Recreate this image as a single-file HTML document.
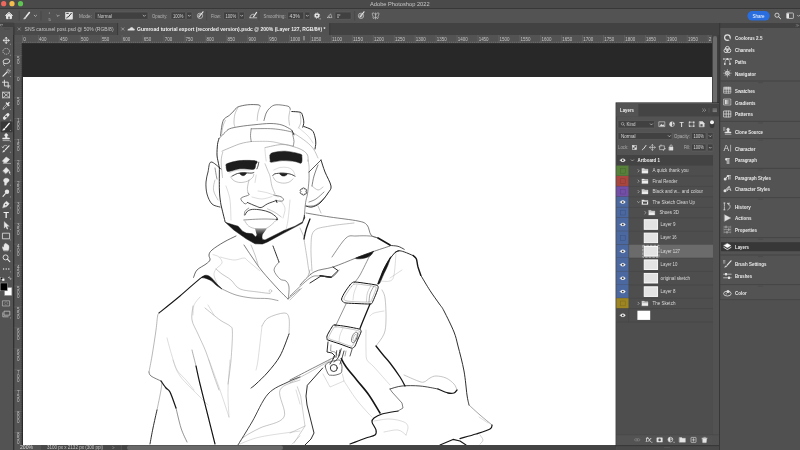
<!DOCTYPE html>
<html><head><meta charset="utf-8">
<style>
*{box-sizing:border-box;margin:0;padding:0}
html,body{width:800px;height:450px;overflow:hidden;background:#282828;font-family:"Liberation Sans",sans-serif}
.a{position:absolute}
svg{position:absolute;left:0;top:0}
svg text{font-family:"Liberation Sans",sans-serif}
#title{left:0;top:0;width:800px;height:8.4px;background:#4a4a4a}
#opts{left:0;top:8.4px;width:800px;height:14.2px;background:#535353;border-top:0.6px solid #383838}
#tabs{left:0;top:22.6px;width:720px;height:12.4px;background:#424242}
#hrul{left:14.4px;top:35px;width:697.6px;height:8px;background:#535353}
#vrul{left:14.4px;top:35px;width:8.1px;height:410px;background:#535353}
#tools{left:0;top:26.6px;width:13.4px;height:424px;background:#535353}
#dark{left:22.5px;top:43px;width:689.5px;height:34px;background:#282828}
#canvas{left:22.5px;top:76.7px;width:689.5px;height:368.3px;background:#fff}
#status{left:14.4px;top:445px;width:705px;height:5px;background:#535353}
#rtop{left:720px;top:22.6px;width:80px;height:5.4px;background:#424242}
#right{left:720px;top:28px;width:80px;height:422px;background:#535353}
</style></head><body>
<div class="a" id="title"></div>
<div class="a" id="opts"></div>
<div class="a" id="tabs"></div>
<div class="a" id="hrul"></div>
<div class="a" id="dark"></div>
<div class="a" id="canvas"></div>
<div class="a" id="vrul"></div>
<div class="a" id="tools"></div>
<div class="a" id="status"></div>
<div class="a" id="rtop"></div>
<div class="a" id="right"></div>
<svg width="800" height="450" viewBox="0 0 800 450" style="opacity:0.999">
<defs><filter id="nf" x="0" y="0" width="800" height="450" filterUnits="userSpaceOnUse"><feOffset dx="0" dy="0"/></filter><linearGradient id="gr" x1="0" x2="1" y1="0" y2="0"><stop offset="0" stop-color="#eee"/><stop offset="1" stop-color="#666"/></linearGradient><linearGradient id="goat" x1="0" x2="0" y1="0" y2="1"><stop offset="0" stop-color="#a0a0a0"/><stop offset="0.5" stop-color="#2c2c2c"/><stop offset="1" stop-color="#111"/></linearGradient><clipPath id="cv"><rect x="22.5" y="76.7" width="689.5" height="368.3"/></clipPath></defs>
<g clip-path="url(#cv)" fill="none" stroke="#111" stroke-linecap="round" stroke-linejoin="round">
<path d="M220.5 135.5C220.8 133.8 221.4 127.8 222.0 125.0C222.6 122.2 222.9 120.6 224.2 119.0C225.4 117.4 227.9 116.6 229.5 115.2C231.1 113.8 232.6 112.2 234.0 110.8C235.4 109.4 235.6 108.0 237.8 107.0C240.1 106.0 244.1 105.2 247.5 104.8C250.9 104.4 255.9 104.6 258.0 104.8C260.1 105.0 259.8 106.0 260.2 106.2" stroke="#4a4a4a" stroke-width="0.8"/>
<path d="M221.6 134.0C221.8 132.7 222.4 128.3 223.0 126.0C223.6 123.7 225.0 121.3 225.4 120.4" stroke="#8c8c8c" stroke-width="0.5"/>
<path d="M260.2 106.2C259.8 107.3 258.5 110.6 258.0 113.0C257.5 115.4 257.3 119.2 257.2 120.5" stroke="#8c8c8c" stroke-width="0.5"/>
<path d="M237.8 107.8C237.3 108.9 235.4 112.0 234.8 114.5C234.2 117.0 234.0 120.8 234.0 122.8C234.0 124.8 234.7 125.9 234.8 126.5" stroke="#8c8c8c" stroke-width="0.5"/>
<path d="M264.0 120.5C264.4 119.2 265.2 115.1 266.2 113.0C267.2 110.9 268.4 109.2 270.0 107.8C271.6 106.4 273.0 105.1 276.0 104.8C279.0 104.5 285.6 105.5 288.0 106.2C290.4 106.9 289.8 108.7 290.2 109.2" stroke="#4a4a4a" stroke-width="0.7"/>
<path d="M290.2 109.2C290.0 110.6 288.9 114.9 288.8 117.5C288.7 120.1 289.4 123.8 289.5 125.0" stroke="#8c8c8c" stroke-width="0.5"/>
<path d="M291.8 111.5C293.2 111.6 298.3 111.7 300.0 112.2C301.7 112.7 301.6 112.9 302.2 114.5C302.8 116.1 303.7 119.9 303.8 122.0C303.9 124.1 302.9 126.3 302.7 127.2" stroke="#161616" stroke-width="0.9"/>
<path d="M300.0 113.0C300.1 114.5 301.1 119.5 300.8 122.0C300.6 124.5 298.9 127.0 298.5 128.0" stroke="#8c8c8c" stroke-width="0.5"/>
<path d="M303.8 126.5C305.2 127.1 310.1 128.4 312.0 130.2C313.9 131.9 314.4 134.9 315.0 137.0C315.6 139.1 315.8 141.0 315.8 143.0C315.8 145.0 315.1 148.0 315.0 149.0" stroke="#161616" stroke-width="0.9"/>
<path d="M294.0 133.2C296.0 134.6 302.8 138.9 306.0 141.5C309.2 144.1 311.5 146.2 313.5 149.0C315.5 151.8 317.2 156.5 318.0 158.0" stroke="#8c8c8c" stroke-width="0.5"/>
<path d="M291.8 130.2L294.0 134.8" stroke="#161616" stroke-width="0.9"/>
<path d="M299.0 128.0C300.5 129.3 305.7 133.5 308.0 136.0C310.3 138.5 312.2 141.8 313.0 143.0" stroke="#aaa" stroke-width="0.4"/>
<path d="M219.0 138.5C220.0 137.5 223.2 134.1 225.0 132.5C226.8 130.9 227.0 129.8 229.5 128.8C232.0 127.8 235.8 127.2 240.0 126.5C244.2 125.8 250.0 125.2 255.0 124.7C260.0 124.2 265.5 123.5 270.0 123.5C274.5 123.5 278.5 124.0 282.0 125.0C285.5 126.0 289.5 128.8 291.0 129.5" stroke="#4a4a4a" stroke-width="0.7"/>
<path d="M251.2 128.8C254.8 128.8 266.4 128.3 273.0 128.8C279.6 129.3 287.8 130.9 291.0 131.8C294.2 132.7 292.0 132.4 292.5 134.0C293.0 135.6 293.9 139.5 294.0 141.5C294.1 143.5 293.3 145.2 293.2 146.0" stroke="#4a4a4a" stroke-width="0.6"/>
<path d="M251.2 141.5C254.3 141.5 264.9 141.1 270.0 141.5C275.1 141.9 278.1 143.1 282.0 143.8C285.9 144.6 291.3 145.6 293.2 146.0" stroke="#8c8c8c" stroke-width="0.5"/>
<path d="M251.2 128.8C251.1 129.9 250.5 133.4 250.5 135.5C250.5 137.6 251.1 140.5 251.2 141.5" stroke="#4a4a4a" stroke-width="0.6"/>
<path d="M222.0 151.2C222.5 151.0 222.0 151.0 225.0 149.8C228.0 148.6 235.6 145.2 240.0 143.8C244.4 142.4 249.3 141.9 251.2 141.5" stroke="#8c8c8c" stroke-width="0.6"/>
<path d="M265.5 147.5C268.2 147.0 277.2 144.6 282.0 144.5C286.8 144.4 290.5 145.8 294.0 146.8C297.5 147.8 300.8 149.1 303.0 150.5C305.2 151.9 306.6 153.2 307.5 155.0C308.4 156.8 308.0 160.2 308.1 161.2" stroke="#8c8c8c" stroke-width="0.6"/>
<path d="M219.0 138.5C218.8 139.5 217.8 141.8 217.5 144.5C217.2 147.2 216.9 152.1 217.0 155.0C217.1 157.9 217.8 159.8 218.2 162.0C218.6 164.2 219.2 167.0 219.4 168.0" stroke="#161616" stroke-width="0.9"/>
<path d="M222.8 152.0C222.5 153.5 221.2 156.8 221.2 161.0C221.1 165.2 222.3 174.8 222.5 177.5" stroke="#8c8c8c" stroke-width="0.5"/>
<path d="M264.8 147.5C264.9 148.8 265.2 152.8 265.4 155.0C265.6 157.2 266.1 160.0 266.2 161.0" stroke="#aaa" stroke-width="0.4"/>
<path d="M308.0 160.0C308.2 161.0 308.8 164.0 309.0 166.0C309.2 168.0 309.0 171.0 309.0 172.0" stroke="#8c8c8c" stroke-width="0.5"/>
<path d="M226.2 165.6C226.4 164.6 225.2 164.3 227.5 163.5C229.8 162.7 235.2 161.0 240.0 160.6C244.8 160.2 253.6 160.3 256.2 161.0C258.8 161.7 255.8 163.8 255.6 165.0C255.4 166.2 255.5 167.3 255.0 168.0C254.5 168.7 255.0 169.3 252.5 169.4C250.0 169.5 243.9 168.5 240.0 168.8C236.1 169.2 231.1 171.4 228.8 171.5C226.6 171.6 226.9 170.4 226.5 169.4C226.1 168.4 226.0 166.6 226.2 165.6Z" fill="#1d1d1d" stroke="#1d1d1d" stroke-width="0.5" />
<path d="M270.0 155.6C270.4 154.4 270.0 153.5 272.5 152.8C275.0 152.1 280.4 151.0 285.0 151.2C289.6 151.4 297.2 153.1 300.0 154.0C302.8 154.9 301.7 155.4 301.9 156.9C302.1 158.4 302.3 162.3 301.2 163.1C300.1 163.9 298.1 161.9 295.0 161.5C291.9 161.1 286.5 160.5 282.5 160.6C278.5 160.7 273.2 162.3 271.2 162.2C269.1 162.1 270.4 161.1 270.2 160.0C270.0 158.9 269.6 156.8 270.0 155.6Z" fill="#1d1d1d" stroke="#1d1d1d" stroke-width="0.5" />
<path d="M258.8 162.2C258.7 162.8 258.3 164.9 258.0 166.0C257.7 167.1 257.1 168.3 256.9 168.8" stroke="#161616" stroke-width="0.7"/>
<path d="M221.0 169.0C219.3 167.8 213.2 161.5 211.0 162.0C208.8 162.5 208.8 168.7 208.0 172.0C207.2 175.3 206.2 178.3 206.0 182.0C205.8 185.7 206.0 190.3 207.0 194.0C208.0 197.7 209.8 201.8 212.0 204.0C214.2 206.2 218.7 206.5 220.0 207.0" stroke="#161616" stroke-width="0.8"/>
<path d="M215.0 168.0C215.2 169.0 215.7 172.2 216.0 174.0C216.3 175.8 216.8 178.2 217.0 179.0" stroke="#4a4a4a" stroke-width="0.6"/>
<path d="M215.0 180.0C214.8 181.0 213.8 184.0 213.6 186.0C213.4 188.0 213.3 189.7 214.0 192.0C214.7 194.3 217.3 198.7 218.0 200.0" stroke="#8c8c8c" stroke-width="0.5"/>
<path d="M309.0 172.0L321.0 160.0" stroke="#161616" stroke-width="0.7"/>
<path d="M321.0 160.0C321.7 162.0 323.3 167.7 325.0 172.0C326.7 176.3 330.5 182.5 331.0 186.0C331.5 189.5 329.8 190.2 328.0 193.0C326.2 195.8 322.7 200.7 320.0 203.0C317.3 205.3 314.3 206.5 312.0 207.0C309.7 207.5 307.0 206.2 306.0 206.0" stroke="#161616" stroke-width="0.9"/>
<path d="M318.0 165.0C317.3 166.8 315.0 172.5 314.0 176.0C313.0 179.5 312.3 184.3 312.0 186.0" stroke="#4a4a4a" stroke-width="0.7"/>
<path d="M312.0 186.0C313.0 186.7 316.2 189.8 318.0 190.0C319.8 190.2 322.2 187.5 323.0 187.0" stroke="#8c8c8c" stroke-width="0.5"/>
<path d="M309.0 202.0C310.2 201.5 313.5 200.7 316.0 199.0C318.5 197.3 322.7 193.2 324.0 192.0" stroke="#4a4a4a" stroke-width="0.6"/>
<path d="M219.4 168.0C219.4 171.7 219.2 184.2 219.4 190.0C219.6 195.8 220.1 199.0 220.6 202.5C221.1 206.0 221.8 208.1 222.5 211.2C223.2 214.3 224.6 219.5 225.0 221.2" stroke="#161616" stroke-width="0.9"/>
<path d="M304.4 215.0C304.6 212.9 305.1 206.0 305.6 202.5C306.1 199.0 306.9 197.6 307.5 193.8C308.1 190.1 308.8 183.6 309.0 180.0C309.2 176.4 309.0 173.3 309.0 172.0" stroke="#4a4a4a" stroke-width="0.6"/>
<path d="M225.0 221.9L233.8 230.0L246.2 238.8L255.0 243.8L262.5 244.0L267.5 241.9L283.8 233.1L302.5 223.1L304.4 215.0L304.8 218.0L302.5 221.9L295.0 226.2L283.8 230.6L280.0 232.5L275.0 235.0L265.0 240.0L262.5 239.4L261.2 235.0L263.0 232.6L258.6 232.6L258.1 233.8L255.6 236.9L252.5 233.8L246.2 233.1L242.5 231.2L238.1 226.2L233.8 225.0L227.5 223.1Z" fill="#181818" stroke="#181818" stroke-width="0.5" />
<path d="M255 228.6L266.9 228.4L262.6 234.4L261.6 240L257 236Z" fill="url(#goat)" stroke="none"/>
<path d="M231.9 176.2C232.8 175.8 235.5 174.1 237.5 173.5C239.5 172.9 241.5 172.9 243.8 172.8C246.1 172.7 249.5 173.2 251.2 173.1C252.9 173.0 253.4 172.6 253.8 172.5" stroke="#161616" stroke-width="0.8"/>
<path d="M240.0 173.2C240.8 172.9 245.4 172.7 246.2 173.0C247.0 173.3 245.5 174.6 245.0 175.0C244.5 175.4 243.6 175.7 243.0 175.7C242.4 175.7 241.7 175.4 241.2 175.0C240.7 174.6 239.2 173.5 240.0 173.2Z" fill="#222" stroke="#222" stroke-width="0.5" />
<path d="M230.6 176.9C231.1 177.5 232.2 179.7 233.8 180.6C235.4 181.5 237.7 182.4 240.0 182.5C242.3 182.6 245.4 182.0 247.5 181.2C249.6 180.4 251.4 178.6 252.5 177.5C253.6 176.4 253.6 174.9 253.8 174.4" stroke="#8c8c8c" stroke-width="0.5"/>
<path d="M272.8 175.6C273.2 175.3 273.4 174.2 275.0 173.8C276.6 173.4 280.0 173.1 282.5 173.1C285.0 173.1 287.9 173.5 290.0 174.0C292.1 174.5 294.2 175.8 295.0 176.2" stroke="#161616" stroke-width="0.8"/>
<path d="M280.0 173.4C280.9 173.1 286.1 173.4 287.0 173.8C287.9 174.2 286.2 175.2 285.6 175.6C285.0 176.0 284.2 176.1 283.5 176.1C282.8 176.1 282.0 175.8 281.4 175.4C280.8 175.0 279.1 173.7 280.0 173.4Z" fill="#222" stroke="#222" stroke-width="0.5" />
<path d="M273.1 176.9C273.6 177.6 274.6 180.2 276.2 181.2C277.8 182.2 280.4 182.9 282.5 183.1C284.6 183.3 287.0 182.9 288.8 182.2C290.6 181.5 292.4 179.4 293.1 178.8" stroke="#8c8c8c" stroke-width="0.5"/>
<path d="M273.8 170.0C274.8 169.6 277.7 167.9 280.0 167.5C282.3 167.1 285.4 167.1 287.5 167.5C289.6 167.9 291.2 168.8 292.5 170.0C293.8 171.2 294.6 174.2 295.0 175.0" stroke="#aaa" stroke-width="0.4"/>
<path d="M229.0 173.0C230.2 172.6 232.5 171.1 236.0 170.6C239.5 170.1 247.7 170.1 250.0 170.0" stroke="#aaa" stroke-width="0.4"/>
<path d="M265.0 163.8C265.4 164.8 266.7 167.9 267.5 170.0C268.3 172.1 269.3 173.5 270.0 176.2C270.7 178.9 271.1 183.3 271.9 186.2C272.7 189.1 274.5 192.5 275.0 193.8" stroke="#8c8c8c" stroke-width="0.5"/>
<path d="M256.2 175.0L255.0 182.5" stroke="#aaa" stroke-width="0.4"/>
<path d="M249.0 180.0C248.7 181.3 247.6 185.8 247.4 188.0C247.2 190.2 248.0 192.2 248.1 193.1" stroke="#8c8c8c" stroke-width="0.5"/>
<path d="M248.1 193.1C248.2 193.4 249.8 194.3 248.8 195.0C247.8 195.7 243.2 196.7 241.9 197.5C240.6 198.3 240.7 198.9 241.2 200.0C241.7 201.1 243.9 203.4 245.0 203.8C246.1 204.2 247.1 202.7 247.5 202.5" stroke="#4a4a4a" stroke-width="0.7"/>
<path d="M247.5 202.5C248.9 203.1 253.9 205.4 256.2 206.2C258.5 207.0 259.3 207.9 261.2 207.5C263.1 207.1 265.0 205.0 267.5 203.8C270.0 202.7 274.8 201.1 276.2 200.6" stroke="#161616" stroke-width="0.8"/>
<path d="M276.2 200.2L276.9 202.4" stroke="#161616" stroke-width="1.0"/>
<path d="M276.2 200.6C277.0 200.7 280.0 201.3 281.2 201.2C282.4 201.1 283.5 200.5 283.5 199.8C283.5 199.1 282.8 197.7 281.2 196.9C279.6 196.1 275.0 195.3 273.8 195.0" stroke="#4a4a4a" stroke-width="0.7"/>
<path d="M258.0 191.0C259.7 191.3 264.7 192.0 268.0 193.0C271.3 194.0 276.3 196.3 278.0 197.0" stroke="#aaa" stroke-width="0.4"/>
<path d="M252.0 197.0C253.7 197.3 258.7 199.1 262.0 199.0C265.3 198.9 270.3 197.0 272.0 196.6" stroke="#aaa" stroke-width="0.4"/>
<path d="M248.8 208.1C248.2 208.6 245.7 210.0 245.0 211.2C244.3 212.3 244.5 214.4 244.4 215.0" stroke="#4a4a4a" stroke-width="0.6"/>
<path d="M245.0 215.0C245.4 214.4 246.2 212.1 247.5 211.2C248.8 210.3 250.2 209.6 252.5 209.4C254.8 209.2 258.3 209.5 261.2 210.0C264.1 210.5 267.5 211.3 270.0 212.5C272.5 213.7 274.9 215.8 276.2 216.9C277.4 218.1 277.3 219.0 277.5 219.4" stroke="#161616" stroke-width="0.8"/>
<circle cx="276.8" cy="219.4" r="0.9" fill="#222" stroke="none"/>
<path d="M243.8 220.0C245.2 219.9 249.0 219.6 252.5 219.4C256.0 219.2 261.1 219.0 265.0 219.0C268.9 219.0 274.3 219.3 276.2 219.4" stroke="#4a4a4a" stroke-width="0.6"/>
<path d="M245.0 221.2C245.6 222.0 246.9 224.9 248.8 226.2C250.7 227.5 253.5 228.4 256.2 228.8C258.9 229.2 262.5 229.4 265.0 228.8C267.5 228.2 269.3 226.5 271.2 225.0C273.1 223.5 275.5 220.8 276.4 220.0" stroke="#8c8c8c" stroke-width="0.5"/>
<path d="M267.5 208.8C268.8 209.4 272.7 211.2 275.0 212.5C277.3 213.8 280.2 216.2 281.2 216.9" stroke="#8c8c8c" stroke-width="0.5"/>
<path d="M280.0 200.0C280.8 201.3 284.5 205.0 285.0 208.0C285.5 211.0 283.3 216.3 283.0 218.0" stroke="#aaa" stroke-width="0.4"/>
<path d="M226.0 186.0C226.7 188.3 229.2 194.3 230.0 200.0C230.8 205.7 230.8 216.7 231.0 220.0" stroke="#aaa" stroke-width="0.4"/>
<path d="M290.0 200.0C289.7 203.3 288.7 215.0 288.0 220.0C287.3 225.0 286.3 228.3 286.0 230.0" stroke="#aaa" stroke-width="0.4"/>
<path d="M306.1 191.5A1.3 1.3 0 0 1 304.8 193.8A1.3 1.3 0 0 1 302.2 193.8A1.3 1.3 0 0 1 300.9 191.5A1.3 1.3 0 0 1 302.2 189.2A1.3 1.3 0 0 1 304.8 189.2A1.3 1.3 0 0 1 306.1 191.5Z" stroke="#2a2a2a" stroke-width="0.8"/>
<path d="M306.0 206.0C307.7 205.8 312.5 206.8 316.0 205.0C319.5 203.2 325.2 196.7 327.0 195.0" stroke="#4a4a4a" stroke-width="0.6"/>
<path d="M318.0 206.0L321.0 213.0" stroke="#8c8c8c" stroke-width="0.5"/>
<path d="M306.0 213.0C310.0 213.7 321.3 215.7 330.0 217.0C338.7 218.3 351.8 219.7 358.0 221.0C364.2 222.3 364.8 222.7 367.0 225.0C369.2 227.3 369.2 232.8 371.0 235.0C372.8 237.2 376.8 237.5 378.0 238.0" stroke="#4a4a4a" stroke-width="0.7"/>
<path d="M378.0 238.0L390.0 245.0" stroke="#161616" stroke-width="1.6"/>
<path d="M389.8 245.4C391.2 245.6 395.6 245.7 398.0 246.3C400.4 247.0 403.2 248.8 404.2 249.3" stroke="#161616" stroke-width="0.8"/>
<path d="M310.0 219.0C309.3 220.8 307.0 226.7 306.0 230.0C305.0 233.3 304.3 237.5 304.0 239.0" stroke="#161616" stroke-width="1.3"/>
<path d="M304.0 239.0C304.5 242.2 306.2 252.7 307.0 258.0C307.8 263.3 308.3 268.2 309.0 271.0C309.7 273.8 310.7 274.3 311.0 275.0" stroke="#8c8c8c" stroke-width="0.5"/>
<path d="M300.0 228.0L304.0 237.0" stroke="#8c8c8c" stroke-width="0.5"/>
<path d="M354.0 223.0C350.0 223.5 336.7 224.7 330.0 226.0C323.3 227.3 317.2 227.5 314.0 231.0C310.8 234.5 311.3 240.3 311.0 247.0C310.7 253.7 311.8 267.0 312.0 271.0" stroke="#8c8c8c" stroke-width="0.5"/>
<path d="M332.0 257.0C334.3 253.8 342.0 241.5 346.0 238.0C350.0 234.5 352.0 236.3 356.0 236.0C360.0 235.7 366.3 235.7 370.0 236.0C373.7 236.3 376.7 237.7 378.0 238.0" stroke="#4a4a4a" stroke-width="0.6"/>
<path d="M390.0 246.0C387.0 247.0 377.7 250.0 372.0 252.0C366.3 254.0 362.5 255.5 356.0 258.0C349.5 260.5 340.0 264.7 333.0 267.0C326.0 269.3 319.5 269.0 314.0 272.0C308.5 275.0 302.3 282.8 300.0 285.0" stroke="#4a4a4a" stroke-width="0.7"/>
<path d="M356.0 258.0C357.7 256.9 369.1 253.1 372.0 252.0C374.9 250.9 373.7 250.9 373.4 251.6C373.1 252.3 371.9 254.8 370.0 256.0C368.1 257.2 364.3 258.3 362.0 258.6C359.7 258.9 354.3 259.1 356.0 258.0Z" fill="#161616" stroke="#161616" stroke-width="0.5" />
<path d="M310.0 283.0L321.0 276.0L331.0 277.4L338.0 270.6L333.0 267.0" stroke="#161616" stroke-width="0.9"/>
<path d="M320.0 275.6L331.0 277.2" stroke="#161616" stroke-width="1.4"/>
<path d="M236.0 236.0C234.0 237.0 228.0 239.7 224.0 242.0C220.0 244.3 214.5 247.8 212.0 250.0C209.5 252.2 209.3 253.3 209.0 255.0C208.7 256.7 210.5 258.5 210.0 260.0C209.5 261.5 208.2 262.3 206.0 264.0C203.8 265.7 199.1 267.8 197.0 270.0C194.9 272.2 194.2 276.2 193.6 277.4" stroke="#2a2a2a" stroke-width="0.7"/>
<path d="M159.0 313.0C162.5 310.2 173.2 301.7 180.0 296.0C186.8 290.3 195.8 281.9 200.0 278.6C204.2 275.3 204.2 276.4 205.0 276.0" stroke="#161616" stroke-width="1.1"/>
<path d="M202.0 277.6C201.8 277.1 203.8 275.7 205.0 275.4C206.2 275.1 207.7 275.3 209.0 276.0C210.3 276.7 211.7 278.1 213.0 279.4C214.3 280.7 215.5 282.4 217.0 284.0C218.5 285.6 222.2 288.8 222.0 289.0C221.8 289.2 217.8 286.4 216.0 285.0C214.2 283.6 212.7 281.7 211.0 280.6C209.3 279.5 207.5 278.9 206.0 278.4C204.5 277.9 202.2 278.1 202.0 277.6Z" fill="#161616" stroke="#161616" stroke-width="0.5" />
<path d="M213.0 254.6C214.0 255.0 217.5 255.6 219.0 257.0C220.5 258.4 222.5 261.0 222.0 263.0C221.5 265.0 217.3 267.0 216.0 269.0C214.7 271.0 213.8 272.7 214.0 275.0C214.2 277.3 216.5 281.7 217.0 283.0" stroke="#aaa" stroke-width="0.4"/>
<path d="M220.0 257.0C222.3 257.5 230.0 259.8 234.0 260.0C238.0 260.2 241.7 257.8 244.0 258.0C246.3 258.2 245.3 258.8 248.0 261.0C250.7 263.2 258.0 269.3 260.0 271.0" stroke="#aaa" stroke-width="0.4"/>
<path d="M244.0 245.0C245.3 247.0 249.0 252.7 252.0 257.0C255.0 261.3 257.7 265.7 262.0 271.0C266.3 276.3 273.7 284.3 278.0 289.0C282.3 293.7 286.3 297.3 288.0 299.0" stroke="#4a4a4a" stroke-width="0.7"/>
<path d="M251.0 245.0C251.7 246.7 253.8 251.7 255.0 255.0C256.2 258.3 257.5 263.3 258.0 265.0" stroke="#8c8c8c" stroke-width="0.5"/>
<path d="M222.0 289.0C224.3 290.0 231.0 293.5 236.0 295.0C241.0 296.5 246.7 297.4 252.0 298.0C257.3 298.6 263.7 298.2 268.0 298.6C272.3 299.0 276.3 300.3 278.0 300.6" stroke="#666" stroke-width="0.6"/>
<path d="M216.0 269.0C217.0 269.8 219.5 272.2 222.0 274.0C224.5 275.8 228.0 277.5 231.0 280.0C234.0 282.5 235.5 287.0 240.0 289.0C244.5 291.0 253.0 291.2 258.0 292.0C263.0 292.8 268.0 293.2 270.0 293.5" stroke="#8c8c8c" stroke-width="0.5"/>
<path d="M273.0 246.0C273.5 247.3 275.0 251.3 276.0 254.0C277.0 256.7 278.5 260.7 279.0 262.0" stroke="#161616" stroke-width="0.9"/>
<path d="M279.0 262.0C278.2 263.3 273.8 267.2 274.0 270.0C274.2 272.8 278.0 277.2 280.0 279.0C282.0 280.8 284.5 279.7 286.0 281.0C287.5 282.3 288.6 284.2 289.0 287.0C289.4 289.8 288.5 296.2 288.4 298.0" stroke="#4a4a4a" stroke-width="0.6"/>
<circle cx="270.4" cy="291" r="1.4" stroke="#999" stroke-width="0.4"/>
<path d="M288.0 299.0C289.0 298.2 292.0 295.7 294.0 294.0C296.0 292.3 299.0 289.8 300.0 289.0" stroke="#4a4a4a" stroke-width="0.6"/>
<path d="M200.0 297.0C199.0 298.3 195.2 302.0 194.0 305.0C192.8 308.0 193.2 313.3 193.0 315.0" stroke="#aaa" stroke-width="0.4"/>
<path d="M208.0 305.0C208.5 305.8 210.0 308.3 211.0 310.0C212.0 311.7 213.5 314.2 214.0 315.0" stroke="#aaa" stroke-width="0.4"/>
<path d="M159.0 313.0C158.8 313.5 158.1 313.2 157.6 316.0C157.1 318.8 156.9 323.3 156.0 330.0C155.1 336.7 153.2 349.0 152.0 356.0C150.8 363.0 149.5 369.3 149.0 372.0" stroke="#707070" stroke-width="0.5"/>
<path d="M149.0 372.0C149.3 372.7 149.0 374.5 151.0 376.0C153.0 377.5 159.3 380.2 161.0 381.0" stroke="#4a4a4a" stroke-width="0.7"/>
<path d="M161.0 381.0C161.8 382.2 164.5 386.2 166.0 388.0C167.5 389.8 168.3 388.7 170.0 392.0C171.7 395.3 175.0 405.3 176.0 408.0" stroke="#161616" stroke-width="1.3"/>
<path d="M176.0 408.0C176.8 411.3 179.2 422.3 181.0 428.0C182.8 433.7 186.0 439.7 187.0 442.0" stroke="#4a4a4a" stroke-width="0.6"/>
<path d="M162.0 382.0C161.8 383.3 161.8 385.3 161.0 390.0C160.2 394.7 157.7 406.7 157.0 410.0" stroke="#707070" stroke-width="0.5"/>
<path d="M157.0 410.0C156.3 413.0 154.2 422.3 153.0 428.0C151.8 433.7 150.5 441.3 150.0 444.0" stroke="#161616" stroke-width="0.9"/>
<path d="M167.0 338.0C167.8 341.0 170.3 350.7 172.0 356.0C173.7 361.3 174.7 366.0 177.0 370.0C179.3 374.0 183.2 376.7 186.0 380.0C188.8 383.3 192.7 388.3 194.0 390.0" stroke="#aaa" stroke-width="0.4"/>
<path d="M173.0 360.0C174.2 362.7 175.5 369.8 180.0 376.0C184.5 382.2 195.3 392.2 200.0 397.0C204.7 401.8 206.7 403.7 208.0 405.0" stroke="#aaa" stroke-width="0.4"/>
<path d="M192.0 350.0C192.3 351.3 193.3 355.3 194.0 358.0C194.7 360.7 195.7 364.7 196.0 366.0" stroke="#777" stroke-width="0.6"/>
<path d="M196.0 366.0C196.7 369.0 198.0 375.7 200.0 384.0C202.0 392.3 205.5 406.0 208.0 416.0C210.5 426.0 213.8 439.3 215.0 444.0" stroke="#161616" stroke-width="1.2"/>
<path d="M193.0 306.0C192.8 308.3 191.2 315.3 192.0 320.0C192.8 324.7 195.7 328.7 198.0 334.0C200.3 339.3 203.3 345.0 206.0 352.0C208.7 359.0 211.8 369.7 214.0 376.0C216.2 382.3 218.2 387.7 219.0 390.0" stroke="#8c8c8c" stroke-width="0.5"/>
<path d="M205.0 308.0C207.5 310.0 215.8 317.0 220.0 320.0C224.2 323.0 227.9 324.0 230.0 326.0C232.1 328.0 232.2 326.3 232.4 332.0C232.6 337.7 231.7 351.3 231.0 360.0C230.3 368.7 228.5 380.0 228.0 384.0" stroke="#8c8c8c" stroke-width="0.5"/>
<path d="M209.0 360.0C210.8 365.0 216.7 380.5 220.0 390.0C223.3 399.5 227.5 412.5 229.0 417.0" stroke="#aaa" stroke-width="0.4"/>
<path d="M230.0 360.0C229.7 365.0 228.2 380.5 228.0 390.0C227.8 399.5 228.8 412.5 229.0 417.0" stroke="#aaa" stroke-width="0.4"/>
<path d="M262.0 326.0C263.0 324.7 264.3 320.2 268.0 318.0C271.7 315.8 280.5 313.0 284.0 313.0C287.5 313.0 288.2 314.5 289.0 318.0C289.8 321.5 289.0 331.3 289.0 334.0" stroke="#8c8c8c" stroke-width="0.5"/>
<path d="M289.0 334.0C287.5 337.7 283.5 349.7 280.0 356.0C276.5 362.3 272.0 367.3 268.0 372.0C264.0 376.7 258.8 381.3 256.0 384.0C253.2 386.7 251.8 387.3 251.0 388.0" stroke="#161616" stroke-width="0.9"/>
<path d="M262.0 326.0C261.3 331.7 259.0 352.7 258.0 360.0C257.0 367.3 256.3 368.3 256.0 370.0" stroke="#aaa" stroke-width="0.4"/>
<path d="M300.0 377.0C298.0 377.8 293.3 379.2 288.0 382.0C282.7 384.8 274.0 387.3 268.0 394.0C262.0 400.7 257.0 413.5 252.0 422.0C247.0 430.5 240.3 441.2 238.0 445.0" stroke="#161616" stroke-width="0.8"/>
<path d="M300.0 380.0C296.7 381.7 282.7 383.8 280.0 390.0C277.3 396.2 287.3 410.7 284.0 417.0C280.7 423.3 266.7 424.7 260.0 428.0C253.3 431.3 247.7 434.2 244.0 437.0C240.3 439.8 239.0 443.7 238.0 445.0" stroke="#8c8c8c" stroke-width="0.5"/>
<path d="M300.0 431.0C293.3 432.0 270.0 434.8 260.0 437.0C250.0 439.2 243.3 442.8 240.0 444.0" stroke="#aaa" stroke-width="0.4"/>
<path d="M296.0 390.0L300.0 404.0" stroke="#aaa" stroke-width="0.4"/>
<path d="M300.0 436.0L292.0 444.0" stroke="#aaa" stroke-width="0.4"/>
<path d="M370.0 255.0C368.3 258.3 362.7 270.3 360.0 275.0C357.3 279.7 355.0 281.7 354.0 283.0" stroke="#4a4a4a" stroke-width="0.6"/>
<path d="M398.9 250.8C398.2 251.1 396.6 251.0 395.0 252.6C393.4 254.2 391.0 257.2 389.0 260.2C387.0 263.2 384.5 267.5 383.0 270.8C381.5 274.1 380.9 277.6 380.0 279.8C379.1 282.0 378.0 283.3 377.6 284.0" stroke="#161616" stroke-width="1.0"/>
<path d="M390.6 257.0C390.2 257.0 387.3 262.2 385.8 265.0C384.3 267.8 382.9 271.0 381.6 274.0C380.3 277.0 378.3 281.5 378.0 283.0C377.7 284.5 378.8 284.6 379.8 283.0C380.8 281.4 382.6 276.6 384.0 273.6C385.4 270.6 386.9 267.8 388.0 265.0C389.1 262.2 391.0 257.0 390.6 257.0Z" fill="#161616" stroke="#161616" stroke-width="0.5" />
<path d="M396.0 253.0C395.7 256.7 395.0 270.3 394.0 275.0C393.0 279.7 392.3 280.0 390.0 281.0C387.7 282.0 381.7 281.0 380.0 281.0" stroke="#aaa" stroke-width="0.4"/>
<path d="M395.0 252.6C395.6 252.3 397.4 250.9 398.9 250.8C400.4 250.7 401.8 251.1 404.2 251.9C406.6 252.7 411.7 255.0 413.2 255.6" stroke="#161616" stroke-width="0.9"/>
<path d="M413.2 255.6C413.7 256.1 415.5 256.9 416.3 258.7C417.1 260.5 417.1 263.4 417.8 266.2C418.6 269.0 420.3 273.8 420.8 275.3" stroke="#161616" stroke-width="1.4"/>
<path d="M420.8 275.3C422.3 277.8 426.8 285.6 429.9 290.4C433.0 295.2 437.0 300.6 439.4 304.0C441.8 307.4 441.6 306.3 444.0 311.0C446.4 315.7 451.7 326.2 454.0 332.0C456.3 337.8 456.3 339.5 458.0 346.0C459.7 352.5 462.5 362.8 464.0 371.0C465.5 379.2 466.2 389.3 467.0 395.0C467.8 400.7 468.7 403.3 469.0 405.0" stroke="#161616" stroke-width="0.9"/>
<path d="M350.0 285.0C351.2 283.5 351.2 283.5 352.0 283.0C352.8 282.5 352.7 281.9 355.0 282.0C357.3 282.1 362.5 282.9 366.0 283.4C369.5 283.9 374.0 284.5 376.0 285.0C378.0 285.5 377.7 285.8 378.0 286.4C378.3 287.0 378.3 287.1 378.0 288.4C377.7 289.7 376.8 291.9 376.0 294.0C375.2 296.1 373.7 299.5 373.0 301.0C372.3 302.5 372.5 302.5 372.0 303.0C371.5 303.5 372.3 303.9 370.0 304.0C367.7 304.1 362.0 303.8 358.0 303.6C354.0 303.4 348.5 303.3 346.0 303.0C343.5 302.7 343.7 302.3 343.0 301.6C342.3 300.9 341.3 300.6 341.6 299.0C341.9 297.4 343.6 294.3 345.0 292.0C346.4 289.7 348.8 286.5 350.0 285.0Z" stroke="#161616" stroke-width="1.0"/>
<path d="M351.6 286.4C352.9 285.1 353.0 284.2 355.4 284.0C357.8 283.8 362.8 284.8 366.0 285.2C369.2 285.6 372.7 286.0 374.4 286.6C376.1 287.2 376.5 286.3 376.0 288.6C375.5 290.9 372.5 298.2 371.4 300.4C370.3 302.6 371.6 301.8 369.4 302.0C367.2 302.2 361.7 302.0 358.0 301.8C354.3 301.6 349.3 301.5 347.0 301.0C344.7 300.5 343.9 300.1 344.0 298.6C344.1 297.1 346.3 294.0 347.6 292.0C348.9 290.0 350.3 287.7 351.6 286.4Z" stroke="#8c8c8c" stroke-width="0.5"/>
<path d="M374.0 286.0C373.3 287.3 370.8 291.3 370.0 294.0C369.2 296.7 369.2 300.7 369.0 302.0" stroke="#4a4a4a" stroke-width="0.5"/>
<path d="M371.0 285.6C370.4 286.8 368.2 290.3 367.4 293.0C366.6 295.7 366.6 300.2 366.4 301.6" stroke="#8c8c8c" stroke-width="0.4"/>
<path d="M357.0 285.0C356.5 286.3 354.7 290.5 354.0 293.0C353.3 295.5 353.2 298.8 353.0 300.0" stroke="#aaa" stroke-width="0.4"/>
<path d="M346.0 304.0L336.0 325.0" stroke="#4a4a4a" stroke-width="0.6"/>
<path d="M370.0 304.0C369.2 306.0 366.7 311.9 365.0 316.0C363.3 320.1 360.8 326.3 360.0 328.4" stroke="#161616" stroke-width="1.3"/>
<path d="M335.0 325.0C332.7 324.8 333.5 325.3 333.0 325.6C332.5 325.9 332.7 325.9 332.0 327.0C331.3 328.1 329.8 330.5 329.0 332.0C328.2 333.5 327.3 334.9 327.0 336.0C326.7 337.1 326.8 337.7 327.0 338.4C327.2 339.1 325.8 339.1 328.0 340.0C330.2 340.9 336.2 342.7 340.0 344.0C343.8 345.3 348.8 347.4 351.0 348.0C353.2 348.6 352.7 347.9 353.4 347.6C354.1 347.3 354.2 347.4 355.0 346.0C355.8 344.6 357.0 341.3 358.0 339.0C359.0 336.7 360.6 333.5 361.0 332.0C361.4 330.5 360.9 330.7 360.6 330.2C360.3 329.7 361.3 329.6 359.0 329.0C356.7 328.4 351.0 327.3 347.0 326.6C343.0 325.9 337.3 325.2 335.0 325.0Z" stroke="#161616" stroke-width="1.0"/>
<path d="M336.0 326.8C333.7 326.8 334.6 326.8 333.4 328.4C332.2 330.0 329.6 334.8 329.0 336.6C328.4 338.4 328.0 338.0 329.8 339.0C331.6 340.0 336.6 341.2 340.0 342.4C343.4 343.6 348.2 345.6 350.4 346.0C352.6 346.4 351.6 347.2 353.0 345.0C354.4 342.8 358.2 335.0 359.0 332.6C359.8 330.2 359.6 331.3 357.6 330.6C355.6 329.9 350.6 329.0 347.0 328.4C343.4 327.8 338.3 326.8 336.0 326.8Z" stroke="#8c8c8c" stroke-width="0.5"/>
<ellipse cx="354.6" cy="337.4" rx="2.5" ry="5.6" transform="rotate(22 354.6 337.4)" stroke="#444" stroke-width="0.6"/>
<ellipse cx="354.8" cy="337.6" rx="1.3" ry="3.6" transform="rotate(22 354.8 337.6)" stroke="#888" stroke-width="0.4"/>
<path d="M343.0 328.0C342.5 329.2 340.7 332.7 340.0 335.0C339.3 337.3 339.2 340.8 339.0 342.0" stroke="#aaa" stroke-width="0.4"/>
<path d="M328.0 342.0L327.0 352.0L332.0 353.0L335.0 356.0L330.0 364.0" stroke="#161616" stroke-width="0.9"/>
<path d="M340.0 350.0C339.7 351.3 339.0 356.0 338.0 358.0C337.0 360.0 334.7 361.3 334.0 362.0" stroke="#161616" stroke-width="0.8"/>
<path d="M344.0 351.0C343.7 352.2 342.7 355.8 342.0 358.0C341.3 360.2 340.3 363.0 340.0 364.0" stroke="#161616" stroke-width="0.8"/>
<path d="M352.0 349.4L350.0 356.0" stroke="#161616" stroke-width="0.7"/>
<path d="M331.0 345.0L330.6 351.0L335.0 352.0L337.0 355.0" stroke="#4a4a4a" stroke-width="0.5"/>
<path d="M346.0 351.0L345.0 356.0" stroke="#4a4a4a" stroke-width="0.5"/>
<path d="M382.0 290.0C382.5 291.3 384.3 293.0 385.0 298.0C385.7 303.0 386.2 314.0 386.0 320.0C385.8 326.0 385.7 329.7 384.0 334.0C382.3 338.3 377.3 344.0 376.0 346.0" stroke="#8c8c8c" stroke-width="0.5"/>
<path d="M376.0 346.0C377.3 347.7 381.7 353.2 384.0 356.0C386.3 358.8 387.3 359.5 390.0 363.0C392.7 366.5 397.5 373.2 400.0 377.0C402.5 380.8 404.2 384.5 405.0 386.0" stroke="#161616" stroke-width="1.3"/>
<path d="M370.0 316.0C370.7 315.5 371.7 313.8 374.0 313.0C376.3 312.2 382.3 311.3 384.0 311.0" stroke="#aaa" stroke-width="0.4"/>
<path d="M366.0 330.0C366.0 333.3 365.8 345.0 366.0 350.0C366.2 355.0 365.7 357.2 367.0 360.0C368.3 362.8 370.2 362.8 374.0 367.0C377.8 371.2 387.3 382.0 390.0 385.0" stroke="#aaa" stroke-width="0.4"/>
<path d="M390.0 278.0L402.0 270.0" stroke="#aaa" stroke-width="0.4"/>
<path d="M290.0 296.0C293.3 293.0 305.0 281.3 310.0 278.0C315.0 274.7 316.3 276.2 320.0 276.0C323.7 275.8 328.8 278.0 332.0 277.0C335.2 276.0 337.8 271.2 339.0 270.0" stroke="#4a4a4a" stroke-width="0.6"/>
<path d="M290.0 300.0L302.0 288.0" stroke="#8c8c8c" stroke-width="0.5"/>
<path d="M310.0 270.0L308.0 276.0" stroke="#8c8c8c" stroke-width="0.5"/>
<path d="M325.3 366.0C325.4 364.8 326.2 364.1 327.0 363.4C327.8 362.7 328.7 362.5 330.0 362.0C331.3 361.5 333.4 360.9 335.0 360.6C336.6 360.3 338.3 359.7 339.3 360.0C340.3 360.3 340.6 361.5 341.0 362.6C341.4 363.7 341.9 365.5 342.0 366.7C342.1 367.9 341.9 369.0 341.8 370.0C341.7 371.0 341.9 372.0 341.3 372.7C340.7 373.4 339.2 374.0 338.0 374.4C336.8 374.8 335.2 375.2 334.0 375.3C332.8 375.4 331.9 375.3 331.0 375.2C330.1 375.1 329.4 375.5 328.7 374.7C328.0 373.9 327.2 372.1 326.6 370.6C326.0 369.2 325.2 367.2 325.3 366.0Z" stroke="#4a4a4a" stroke-width="0.8"/>
<circle cx="333.8" cy="368" r="3.5" stroke="#222" stroke-width="0.9"/>
<path d="M331.3 358.7C327.8 360.5 316.9 366.1 310.0 369.6C303.1 373.2 293.3 378.3 290.0 380.0" stroke="#4a4a4a" stroke-width="0.7"/>
<path d="M330.0 360.7C326.7 362.6 316.7 368.3 310.0 372.0C303.3 375.7 293.3 380.9 290.0 382.7" stroke="#8c8c8c" stroke-width="0.5"/>
<path d="M322.7 368.0L307.3 385.3L306.0 396.0L307.0 405.0L314.0 433.0L311.0 439.0L305.0 445.0" stroke="#161616" stroke-width="0.9"/>
<path d="M297.3 386.7L300.7 396.0L305.0 426.0L294.0 443.0" stroke="#8c8c8c" stroke-width="0.4"/>
<path d="M290.0 433.0L305.0 426.0" stroke="#8c8c8c" stroke-width="0.4"/>
<path d="M323.0 374.0L330.0 387.0L344.0 381.0L342.4 374.0" stroke="#aaa" stroke-width="0.4"/>
<path d="M341.3 358.7C342.1 360.0 343.4 363.1 346.0 366.7C348.6 370.2 352.9 375.3 356.7 380.0C360.5 384.7 364.8 389.2 368.7 394.7C372.6 400.2 378.1 409.9 380.0 413.0" stroke="#161616" stroke-width="1.6"/>
<path d="M344.0 381.0C346.0 384.0 352.0 393.7 356.0 399.0C360.0 404.3 365.3 410.0 368.0 413.0C370.7 416.0 371.3 416.3 372.0 417.0" stroke="#aaa" stroke-width="0.4"/>
<path d="M334.0 356.0L332.7 358.7" stroke="#161616" stroke-width="0.7"/>
<path d="M336.7 350.7L336.0 357.3" stroke="#161616" stroke-width="0.7"/>
<path d="M341.3 348.7L339.3 356.0" stroke="#161616" stroke-width="0.7"/>
<path d="M390.0 389.0C392.0 388.5 397.0 386.5 402.0 386.0C407.0 385.5 414.0 385.5 420.0 386.0C426.0 386.5 435.0 388.5 438.0 389.0" stroke="#161616" stroke-width="0.8"/>
<path d="M438.0 389.0C439.7 389.7 445.3 392.3 448.0 393.0C450.7 393.7 452.5 393.5 454.0 393.0C455.5 392.5 456.5 390.5 457.0 390.0" stroke="#161616" stroke-width="1.3"/>
<path d="M457.0 390.0C456.5 389.0 455.8 386.0 454.0 384.0C452.2 382.0 449.0 379.3 446.0 378.0C443.0 376.7 438.7 376.0 436.0 376.0C433.3 376.0 432.0 377.0 430.0 378.0C428.0 379.0 426.0 381.5 424.0 382.0C422.0 382.5 421.3 382.2 418.0 381.0C414.7 379.8 406.3 376.0 404.0 375.0" stroke="#8c8c8c" stroke-width="0.5"/>
<path d="M390.0 389.0L392.0 392.0L402.0 403.0L403.0 408.0L398.0 411.0" stroke="#4a4a4a" stroke-width="0.7"/>
<path d="M398.0 411.0C395.3 411.5 386.0 412.8 382.0 414.0C378.0 415.2 375.7 416.7 374.0 418.0C372.3 419.3 371.7 420.0 372.0 422.0C372.3 424.0 375.5 427.8 376.0 430.0C376.5 432.2 376.7 433.7 375.0 435.0C373.3 436.3 368.8 437.0 366.0 438.0C363.2 439.0 360.7 440.0 358.0 441.0C355.3 442.0 351.3 443.5 350.0 444.0" stroke="#161616" stroke-width="1.2"/>
<path d="M374.0 421.0C376.7 420.7 385.0 418.8 390.0 419.0C395.0 419.2 401.0 420.7 404.0 422.0C407.0 423.3 407.7 424.8 408.0 427.0C408.3 429.2 406.3 433.7 406.0 435.0" stroke="#aaa" stroke-width="0.4"/>
<path d="M384.0 432.0C386.3 431.7 394.3 429.5 398.0 430.0C401.7 430.5 404.7 434.2 406.0 435.0" stroke="#aaa" stroke-width="0.4"/>
<path d="M469.0 405.0C470.8 406.7 476.2 411.7 480.0 415.0C483.8 418.3 490.0 423.3 492.0 425.0" stroke="#4a4a4a" stroke-width="0.5"/>
<path d="M492.0 425.0C491.7 425.7 492.7 427.5 490.0 429.0C487.3 430.5 481.0 432.4 476.0 434.0C471.0 435.6 462.7 437.8 460.0 438.6" stroke="#161616" stroke-width="1.2"/>
<path d="M479.0 417.0L488.0 423.0" stroke="#aaa" stroke-width="0.4"/>
<path d="M440.0 445.0L453.0 439.4L460.0 441.0L466.0 445.0" stroke="#161616" stroke-width="1.1"/>
<path d="M480.0 435.0C480.5 435.8 483.0 438.5 483.0 440.0C483.0 441.5 480.5 443.3 480.0 444.0" stroke="#8c8c8c" stroke-width="0.4"/>
</g>
<g id="ui-main" filter="url(#nf)">
<circle cx="3.7" cy="3.7" r="2.6" fill="#ee6a5f" stroke="none" stroke-width="0.7" />
<circle cx="12" cy="3.7" r="2.6" fill="#f5bf4f" stroke="none" stroke-width="0.7" />
<circle cx="20.5" cy="3.7" r="2.6" fill="#5fc653" stroke="none" stroke-width="0.7" />
<text x="370" y="6.36" font-size="6" fill="#c9c9c9" text-anchor="start" textLength="59.6" lengthAdjust="spacingAndGlyphs">Adobe Photoshop 2022</text>
<path d="M5.6 15.4L9 12.3L12.4 15.4M6.6 15V18.6H8.2V16.4H9.8V18.6H11.4V15" stroke="#e8e8e8" stroke-width="1" fill="none" stroke-linecap="round" stroke-linejoin="round" />
<path d="M6.6 15.2L9 13L11.4 15.2V18.6H6.6Z" stroke="none" stroke-width="0" fill="#e8e8e8" stroke-linecap="round" stroke-linejoin="round" />
<rect x="8.3" y="16.6" width="1.4" height="2" fill="#535353" />
<line x1="19.3" y1="11" x2="19.3" y2="20.5" stroke="#444" stroke-width="0.6" />
<path d="M24 18.8C24.3 17.3 25 16.9 25.8 17.3C26.4 17.9 26 18.8 24 18.8Z" stroke="#e8e8e8" stroke-width="0.5" fill="#e8e8e8" stroke-linecap="round" stroke-linejoin="round" />
<path d="M26.2 16.6L29.4 12.6" stroke="#e8e8e8" stroke-width="1.6" fill="none" stroke-linecap="round" stroke-linejoin="round" />
<path d="M34.2 15.2L35.4 16.4L36.6 15.2" stroke="#d0d0d0" stroke-width="0.7" fill="none" stroke-linecap="round" stroke-linejoin="round" />
<line x1="41" y1="11" x2="41" y2="20.5" stroke="#444" stroke-width="0.6" />
<circle cx="49.3" cy="12.9" r="0.5" fill="#cfcfcf" stroke="none" stroke-width="0.7" />
<text x="48.4" y="20.94" font-size="4" fill="#c0c0c0" text-anchor="start">5</text>
<path d="M56.8 15.2L58 16.4L59.2 15.2" stroke="#d0d0d0" stroke-width="0.7" fill="none" stroke-linecap="round" stroke-linejoin="round" />
<rect x="65.2" y="12" width="7.6" height="7.4" fill="#e4e4e4" rx="0.6"/>
<path d="M66.8 18C67 17 67.6 16.8 68.2 17.1L71.4 13.2" stroke="#333" stroke-width="1" fill="none" stroke-linecap="round" stroke-linejoin="round" />
<rect x="66.3" y="12.8" width="2.4" height="1.2" fill="#555" />
<text x="79" y="17.70" font-size="5" fill="#b4b4b4" text-anchor="start" textLength="13.0" lengthAdjust="spacingAndGlyphs">Mode:</text>
<rect x="94.5" y="12" width="53.5" height="7.3" rx="0.8" fill="#414141" stroke="#686868" stroke-width="0.5"/>
<text x="97.5" y="17.70" font-size="5" fill="#d4d4d4" text-anchor="start" textLength="14.5" lengthAdjust="spacingAndGlyphs">Normal</text>
<path d="M143.1 15.2L144.3 16.4L145.5 15.2" stroke="#d0d0d0" stroke-width="0.7" fill="none" stroke-linecap="round" stroke-linejoin="round" />
<text x="152" y="17.70" font-size="5" fill="#b4b4b4" text-anchor="start" textLength="15.5" lengthAdjust="spacingAndGlyphs">Opacity:</text>
<rect x="171" y="12" width="14.6" height="7.3" rx="0.8" fill="#414141" stroke="#686868" stroke-width="0.5"/>
<text x="173" y="17.70" font-size="5" fill="#d4d4d4" text-anchor="start" textLength="10.5" lengthAdjust="spacingAndGlyphs">100%</text>
<rect x="186.6" y="12" width="5.4" height="7.3" rx="0.8" fill="#414141" stroke="#686868" stroke-width="0.5"/>
<path d="M188.2 15.25L189.3 16.35L190.4 15.25" stroke="#d0d0d0" stroke-width="0.7" fill="none" stroke-linecap="round" stroke-linejoin="round" />
<circle cx="200" cy="15.8" r="2.7" fill="none" stroke="#e8e8e8" stroke-width="0.6" />
<path d="M199 17L203 11.8" stroke="#e8e8e8" stroke-width="1.1" fill="none" stroke-linecap="round" stroke-linejoin="round" />
<path d="M198.4 16.2A1.8 1.8 0 0 1 200.6 14.2" stroke="#e8e8e8" stroke-width="0.5" fill="none" stroke-linecap="round" stroke-linejoin="round" />
<line x1="206.6" y1="11" x2="206.6" y2="20.5" stroke="#444" stroke-width="0.6" />
<text x="211" y="17.70" font-size="5" fill="#b4b4b4" text-anchor="start" textLength="10.0" lengthAdjust="spacingAndGlyphs">Flow:</text>
<rect x="223.6" y="12" width="14.4" height="7.3" rx="0.8" fill="#414141" stroke="#686868" stroke-width="0.5"/>
<text x="225.4" y="17.70" font-size="5" fill="#d4d4d4" text-anchor="start" textLength="10.8" lengthAdjust="spacingAndGlyphs">100%</text>
<rect x="239" y="12" width="5.4" height="7.3" rx="0.8" fill="#414141" stroke="#686868" stroke-width="0.5"/>
<path d="M240.6 15.25L241.7 16.35L242.8 15.25" stroke="#d0d0d0" stroke-width="0.7" fill="none" stroke-linecap="round" stroke-linejoin="round" />
<path d="M250 17.6C250 15.4 251.6 14 253.6 14.2M249.8 17.8H256.6" stroke="#e8e8e8" stroke-width="0.7" fill="none" stroke-linecap="round" stroke-linejoin="round" />
<path d="M253.6 16.6L256.6 12.4" stroke="#e8e8e8" stroke-width="1.1" fill="none" stroke-linecap="round" stroke-linejoin="round" />
<line x1="259" y1="11" x2="259" y2="20.5" stroke="#444" stroke-width="0.6" />
<text x="263.6" y="17.70" font-size="5" fill="#b4b4b4" text-anchor="start" textLength="22.0" lengthAdjust="spacingAndGlyphs">Smoothing:</text>
<rect x="287.6" y="12" width="16" height="7.3" rx="0.8" fill="#414141" stroke="#686868" stroke-width="0.5"/>
<text x="289.6" y="17.70" font-size="5" fill="#d4d4d4" text-anchor="start" textLength="10.4" lengthAdjust="spacingAndGlyphs">43%</text>
<rect x="304.6" y="12" width="5.4" height="7.3" rx="0.8" fill="#414141" stroke="#686868" stroke-width="0.5"/>
<path d="M306.2 15.25L307.3 16.35L308.4 15.25" stroke="#d0d0d0" stroke-width="0.7" fill="none" stroke-linecap="round" stroke-linejoin="round" />
<circle cx="317" cy="15.6" r="1.7" fill="none" stroke="#e8e8e8" stroke-width="1.5" />
<circle cx="317" cy="15.6" r="2.7" fill="none" stroke="#e8e8e8" stroke-width="0.9" stroke-dasharray="1 1.12"/>
<rect x="319.6" y="18.4" width="1" height="1" fill="#ddd" />
<path d="M327.4 17.6H332L330.6 13.8L327.4 17.6M329.6 17.6A2 2 0 0 0 328.8 16" stroke="#cfcfcf" stroke-width="0.6" fill="none" stroke-linecap="round" stroke-linejoin="round" />
<rect x="335" y="12" width="16.2" height="7.3" rx="0.8" fill="#414141" stroke="#686868" stroke-width="0.5"/>
<text x="337" y="17.70" font-size="5" fill="#d4d4d4" text-anchor="start" textLength="3.6" lengthAdjust="spacingAndGlyphs">0°</text>
<line x1="354.6" y1="11" x2="354.6" y2="20.5" stroke="#444" stroke-width="0.6" />
<circle cx="361" cy="15.8" r="2.7" fill="none" stroke="#e8e8e8" stroke-width="0.6" />
<path d="M360 17L364 11.8" stroke="#e8e8e8" stroke-width="1.1" fill="none" stroke-linecap="round" stroke-linejoin="round" />
<circle cx="361" cy="15.8" r="1.2" fill="none" stroke="#e8e8e8" stroke-width="0.5" />
<path d="M375.6 13V19M375 14.2C373 12 372 12.6 372.4 14.6C372.8 16 373.6 16.4 373 17.6C372.8 18.8 374.4 18.8 375 17.4M376.2 14.2C378.2 12 379.2 12.6 378.8 14.6C378.4 16 377.6 16.4 378.2 17.6C378.4 18.8 376.8 18.8 376.2 17.4" stroke="#e8e8e8" stroke-width="0.6" fill="none" stroke-linecap="round" stroke-linejoin="round" />
<rect x="747.4" y="11" width="22.4" height="9.6" rx="4.8" fill="#2a6ee0"/>
<text x="752.6" y="17.60" font-size="5" fill="#fff" text-anchor="start" textLength="12.0" lengthAdjust="spacingAndGlyphs">Share</text>
<circle cx="777" cy="15.2" r="2.1" fill="none" stroke="#e8e8e8" stroke-width="0.8" />
<path d="M778.6 16.8L780.6 18.8" stroke="#e8e8e8" stroke-width="1" fill="none" stroke-linecap="round" stroke-linejoin="round" />
<rect x="786.6" y="13" width="6.8" height="5.4" rx="0.6" fill="none" stroke="#e6e6e6" stroke-width="0.7"/>
<rect x="787" y="13.4" width="2" height="4.6" fill="#e6e6e6" />
<path d="M797.5 15.25L798.6 16.35L799.7 15.25" stroke="#d0d0d0" stroke-width="0.7" fill="none" stroke-linecap="round" stroke-linejoin="round" />
<rect x="14.4" y="23" width="103" height="12" fill="#4a4a4a" />
<rect x="118" y="23" width="211.4" height="12" fill="#535353" />
<line x1="117.6" y1="23" x2="117.6" y2="35" stroke="#383838" stroke-width="0.7" />
<line x1="329.6" y1="23" x2="329.6" y2="35" stroke="#383838" stroke-width="0.7" />
<path d="M18 27.8L20.4 30.2M20.4 27.8L18 30.2" stroke="#bdbdbd" stroke-width="0.5" fill="none" stroke-linecap="round" stroke-linejoin="round" />
<text x="24.6" y="30.94" font-size="5.4" fill="#c4c4c4" text-anchor="start" textLength="89.0" lengthAdjust="spacingAndGlyphs">SNS carousel post.psd @ 50% (RGB/8)</text>
<path d="M121.6 27.8L124 30.2M124 27.8L121.6 30.2" stroke="#d0d0d0" stroke-width="0.5" fill="none" stroke-linecap="round" stroke-linejoin="round" />
<path d="M127.6 30.6H134.4C135.2 29.4 134.4 28.4 133.4 28.6C133 27 130.6 26.8 130 28.4C128.4 28.2 127.2 29.4 127.6 30.6Z" stroke="none" stroke-width="0" fill="#e0e0e0" stroke-linecap="round" stroke-linejoin="round" />
<text x="137" y="30.94" font-size="5.4" font-weight="bold" fill="#f0f0f0" text-anchor="start" textLength="188.4" lengthAdjust="spacingAndGlyphs">Gumroad tutorial export (recorded version).psdc @ 200% (Layer 127, RGB/8#) *</text>
<rect x="0" y="22.6" width="13.4" height="4" fill="#424242" />
<path d="M0.4 24.2L1.2 25L0.4 25.8M1.8 24.2L2.6 25L1.8 25.8" stroke="#ddd" stroke-width="0.5" fill="none" stroke-linecap="round" stroke-linejoin="round" />
<line x1="4" y1="29" x2="9.6" y2="29" stroke="#454545" stroke-width="1.2" stroke-dasharray="0.5 0.5"/>
<line x1="13.9" y1="26.6" x2="13.9" y2="450" stroke="#3a3a3a" stroke-width="1" />
<line x1="38.4" y1="35" x2="38.4" y2="43" stroke="#777" stroke-width="0.4" />
<text x="39.1" y="40.53" font-size="4.8" fill="#c4c4c4" text-anchor="start" textLength="7.5" lengthAdjust="spacingAndGlyphs">400</text>
<line x1="59.33" y1="35" x2="59.33" y2="43" stroke="#777" stroke-width="0.4" />
<text x="60.03" y="40.53" font-size="4.8" fill="#c4c4c4" text-anchor="start" textLength="7.5" lengthAdjust="spacingAndGlyphs">450</text>
<line x1="80.26" y1="35" x2="80.26" y2="43" stroke="#777" stroke-width="0.4" />
<text x="80.96" y="40.53" font-size="4.8" fill="#c4c4c4" text-anchor="start" textLength="7.5" lengthAdjust="spacingAndGlyphs">500</text>
<line x1="101.19" y1="35" x2="101.19" y2="43" stroke="#777" stroke-width="0.4" />
<text x="101.89" y="40.53" font-size="4.8" fill="#c4c4c4" text-anchor="start" textLength="7.5" lengthAdjust="spacingAndGlyphs">550</text>
<line x1="122.12" y1="35" x2="122.12" y2="43" stroke="#777" stroke-width="0.4" />
<text x="122.82" y="40.53" font-size="4.8" fill="#c4c4c4" text-anchor="start" textLength="7.5" lengthAdjust="spacingAndGlyphs">600</text>
<line x1="143.05" y1="35" x2="143.05" y2="43" stroke="#777" stroke-width="0.4" />
<text x="143.75" y="40.53" font-size="4.8" fill="#c4c4c4" text-anchor="start" textLength="7.5" lengthAdjust="spacingAndGlyphs">650</text>
<line x1="163.98" y1="35" x2="163.98" y2="43" stroke="#777" stroke-width="0.4" />
<text x="164.68" y="40.53" font-size="4.8" fill="#c4c4c4" text-anchor="start" textLength="7.5" lengthAdjust="spacingAndGlyphs">700</text>
<line x1="184.91" y1="35" x2="184.91" y2="43" stroke="#777" stroke-width="0.4" />
<text x="185.61" y="40.53" font-size="4.8" fill="#c4c4c4" text-anchor="start" textLength="7.5" lengthAdjust="spacingAndGlyphs">750</text>
<line x1="205.84" y1="35" x2="205.84" y2="43" stroke="#777" stroke-width="0.4" />
<text x="206.54" y="40.53" font-size="4.8" fill="#c4c4c4" text-anchor="start" textLength="7.5" lengthAdjust="spacingAndGlyphs">800</text>
<line x1="226.77" y1="35" x2="226.77" y2="43" stroke="#777" stroke-width="0.4" />
<text x="227.47" y="40.53" font-size="4.8" fill="#c4c4c4" text-anchor="start" textLength="7.5" lengthAdjust="spacingAndGlyphs">850</text>
<line x1="247.7" y1="35" x2="247.7" y2="43" stroke="#777" stroke-width="0.4" />
<text x="248.4" y="40.53" font-size="4.8" fill="#c4c4c4" text-anchor="start" textLength="7.5" lengthAdjust="spacingAndGlyphs">900</text>
<line x1="268.63" y1="35" x2="268.63" y2="43" stroke="#777" stroke-width="0.4" />
<text x="269.33" y="40.53" font-size="4.8" fill="#c4c4c4" text-anchor="start" textLength="7.5" lengthAdjust="spacingAndGlyphs">950</text>
<line x1="289.56" y1="35" x2="289.56" y2="43" stroke="#777" stroke-width="0.4" />
<text x="290.26" y="40.53" font-size="4.8" fill="#c4c4c4" text-anchor="start" textLength="10.0" lengthAdjust="spacingAndGlyphs">1000</text>
<line x1="310.49" y1="35" x2="310.49" y2="43" stroke="#777" stroke-width="0.4" />
<text x="311.19" y="40.53" font-size="4.8" fill="#c4c4c4" text-anchor="start" textLength="10.0" lengthAdjust="spacingAndGlyphs">1050</text>
<line x1="331.42" y1="35" x2="331.42" y2="43" stroke="#777" stroke-width="0.4" />
<text x="332.12" y="40.53" font-size="4.8" fill="#c4c4c4" text-anchor="start" textLength="10.0" lengthAdjust="spacingAndGlyphs">1100</text>
<line x1="352.35" y1="35" x2="352.35" y2="43" stroke="#777" stroke-width="0.4" />
<text x="353.05" y="40.53" font-size="4.8" fill="#c4c4c4" text-anchor="start" textLength="10.0" lengthAdjust="spacingAndGlyphs">1150</text>
<line x1="373.28" y1="35" x2="373.28" y2="43" stroke="#777" stroke-width="0.4" />
<text x="373.98" y="40.53" font-size="4.8" fill="#c4c4c4" text-anchor="start" textLength="10.0" lengthAdjust="spacingAndGlyphs">1200</text>
<line x1="394.21" y1="35" x2="394.21" y2="43" stroke="#777" stroke-width="0.4" />
<text x="394.91" y="40.53" font-size="4.8" fill="#c4c4c4" text-anchor="start" textLength="10.0" lengthAdjust="spacingAndGlyphs">1250</text>
<line x1="415.14" y1="35" x2="415.14" y2="43" stroke="#777" stroke-width="0.4" />
<text x="415.84" y="40.53" font-size="4.8" fill="#c4c4c4" text-anchor="start" textLength="10.0" lengthAdjust="spacingAndGlyphs">1300</text>
<line x1="436.07" y1="35" x2="436.07" y2="43" stroke="#777" stroke-width="0.4" />
<text x="436.77" y="40.53" font-size="4.8" fill="#c4c4c4" text-anchor="start" textLength="10.0" lengthAdjust="spacingAndGlyphs">1350</text>
<line x1="457" y1="35" x2="457" y2="43" stroke="#777" stroke-width="0.4" />
<text x="457.7" y="40.53" font-size="4.8" fill="#c4c4c4" text-anchor="start" textLength="10.0" lengthAdjust="spacingAndGlyphs">1400</text>
<line x1="477.93" y1="35" x2="477.93" y2="43" stroke="#777" stroke-width="0.4" />
<text x="478.63" y="40.53" font-size="4.8" fill="#c4c4c4" text-anchor="start" textLength="10.0" lengthAdjust="spacingAndGlyphs">1450</text>
<line x1="498.86" y1="35" x2="498.86" y2="43" stroke="#777" stroke-width="0.4" />
<text x="499.56" y="40.53" font-size="4.8" fill="#c4c4c4" text-anchor="start" textLength="10.0" lengthAdjust="spacingAndGlyphs">1500</text>
<line x1="519.79" y1="35" x2="519.79" y2="43" stroke="#777" stroke-width="0.4" />
<text x="520.49" y="40.53" font-size="4.8" fill="#c4c4c4" text-anchor="start" textLength="10.0" lengthAdjust="spacingAndGlyphs">1550</text>
<line x1="540.72" y1="35" x2="540.72" y2="43" stroke="#777" stroke-width="0.4" />
<text x="541.42" y="40.53" font-size="4.8" fill="#c4c4c4" text-anchor="start" textLength="10.0" lengthAdjust="spacingAndGlyphs">1600</text>
<line x1="561.65" y1="35" x2="561.65" y2="43" stroke="#777" stroke-width="0.4" />
<text x="562.35" y="40.53" font-size="4.8" fill="#c4c4c4" text-anchor="start" textLength="10.0" lengthAdjust="spacingAndGlyphs">1650</text>
<line x1="582.58" y1="35" x2="582.58" y2="43" stroke="#777" stroke-width="0.4" />
<text x="583.28" y="40.53" font-size="4.8" fill="#c4c4c4" text-anchor="start" textLength="10.0" lengthAdjust="spacingAndGlyphs">1700</text>
<line x1="603.51" y1="35" x2="603.51" y2="43" stroke="#777" stroke-width="0.4" />
<text x="604.21" y="40.53" font-size="4.8" fill="#c4c4c4" text-anchor="start" textLength="10.0" lengthAdjust="spacingAndGlyphs">1750</text>
<line x1="624.44" y1="35" x2="624.44" y2="43" stroke="#777" stroke-width="0.4" />
<text x="625.14" y="40.53" font-size="4.8" fill="#c4c4c4" text-anchor="start" textLength="10.0" lengthAdjust="spacingAndGlyphs">1800</text>
<line x1="645.37" y1="35" x2="645.37" y2="43" stroke="#777" stroke-width="0.4" />
<text x="646.07" y="40.53" font-size="4.8" fill="#c4c4c4" text-anchor="start" textLength="10.0" lengthAdjust="spacingAndGlyphs">1850</text>
<line x1="666.3" y1="35" x2="666.3" y2="43" stroke="#777" stroke-width="0.4" />
<text x="667" y="40.53" font-size="4.8" fill="#c4c4c4" text-anchor="start" textLength="10.0" lengthAdjust="spacingAndGlyphs">1900</text>
<line x1="687.23" y1="35" x2="687.23" y2="43" stroke="#777" stroke-width="0.4" />
<text x="687.93" y="40.53" font-size="4.8" fill="#c4c4c4" text-anchor="start" textLength="10.0" lengthAdjust="spacingAndGlyphs">1950</text>
<line x1="708.16" y1="35" x2="708.16" y2="43" stroke="#777" stroke-width="0.4" />
<text x="708.86" y="40.53" font-size="4.8" fill="#c4c4c4" text-anchor="start">2</text>
<line x1="22.3" y1="42.4" x2="712" y2="42.4" stroke="#8a8a8a" stroke-width="1.2" stroke-dasharray="0.4 1.693"/>
<line x1="22.5" y1="35" x2="22.5" y2="43" stroke="#777" stroke-width="0.4" />
<text x="23.2" y="40.53" font-size="4.8" fill="#c4c4c4" text-anchor="start">0</text>
<line x1="304" y1="36" x2="304" y2="40.4" stroke="#e8e8e8" stroke-width="0.7" />
<line x1="14.4" y1="43" x2="712" y2="43" stroke="#666" stroke-width="0.3" />
<line x1="14.4" y1="55.7" x2="22.5" y2="55.7" stroke="#777" stroke-width="0.4" />
<text x="18.3" y="59.5" font-size="4.6" fill="#c4c4c4" text-anchor="middle">5</text>
<text x="18.3" y="63.5" font-size="4.6" fill="#c4c4c4" text-anchor="middle">0</text>
<line x1="14.4" y1="76.7" x2="22.5" y2="76.7" stroke="#777" stroke-width="0.4" />
<text x="18.3" y="80.5" font-size="4.6" fill="#c4c4c4" text-anchor="middle">0</text>
<line x1="14.4" y1="97.63" x2="22.5" y2="97.63" stroke="#777" stroke-width="0.4" />
<text x="18.3" y="101.4" font-size="4.6" fill="#c4c4c4" text-anchor="middle">5</text>
<text x="18.3" y="105.4" font-size="4.6" fill="#c4c4c4" text-anchor="middle">0</text>
<line x1="14.4" y1="118.56" x2="22.5" y2="118.56" stroke="#777" stroke-width="0.4" />
<text x="18.3" y="122.4" font-size="4.6" fill="#c4c4c4" text-anchor="middle">1</text>
<text x="18.3" y="126.4" font-size="4.6" fill="#c4c4c4" text-anchor="middle">0</text>
<text x="18.3" y="130.4" font-size="4.6" fill="#c4c4c4" text-anchor="middle">0</text>
<line x1="14.4" y1="139.49" x2="22.5" y2="139.49" stroke="#777" stroke-width="0.4" />
<text x="18.3" y="143.3" font-size="4.6" fill="#c4c4c4" text-anchor="middle">1</text>
<text x="18.3" y="147.3" font-size="4.6" fill="#c4c4c4" text-anchor="middle">5</text>
<text x="18.3" y="151.3" font-size="4.6" fill="#c4c4c4" text-anchor="middle">0</text>
<line x1="14.4" y1="160.42" x2="22.5" y2="160.42" stroke="#777" stroke-width="0.4" />
<text x="18.3" y="164.2" font-size="4.6" fill="#c4c4c4" text-anchor="middle">2</text>
<text x="18.3" y="168.2" font-size="4.6" fill="#c4c4c4" text-anchor="middle">0</text>
<text x="18.3" y="172.2" font-size="4.6" fill="#c4c4c4" text-anchor="middle">0</text>
<line x1="14.4" y1="181.35" x2="22.5" y2="181.35" stroke="#777" stroke-width="0.4" />
<text x="18.3" y="185.2" font-size="4.6" fill="#c4c4c4" text-anchor="middle">2</text>
<text x="18.3" y="189.2" font-size="4.6" fill="#c4c4c4" text-anchor="middle">5</text>
<text x="18.3" y="193.2" font-size="4.6" fill="#c4c4c4" text-anchor="middle">0</text>
<line x1="14.4" y1="202.28" x2="22.5" y2="202.28" stroke="#777" stroke-width="0.4" />
<text x="18.3" y="206.1" font-size="4.6" fill="#c4c4c4" text-anchor="middle">3</text>
<text x="18.3" y="210.1" font-size="4.6" fill="#c4c4c4" text-anchor="middle">0</text>
<text x="18.3" y="214.1" font-size="4.6" fill="#c4c4c4" text-anchor="middle">0</text>
<line x1="14.4" y1="223.21" x2="22.5" y2="223.21" stroke="#777" stroke-width="0.4" />
<text x="18.3" y="227.0" font-size="4.6" fill="#c4c4c4" text-anchor="middle">3</text>
<text x="18.3" y="231.0" font-size="4.6" fill="#c4c4c4" text-anchor="middle">5</text>
<text x="18.3" y="235.0" font-size="4.6" fill="#c4c4c4" text-anchor="middle">0</text>
<line x1="14.4" y1="244.14" x2="22.5" y2="244.14" stroke="#777" stroke-width="0.4" />
<text x="18.3" y="247.9" font-size="4.6" fill="#c4c4c4" text-anchor="middle">4</text>
<text x="18.3" y="251.9" font-size="4.6" fill="#c4c4c4" text-anchor="middle">0</text>
<text x="18.3" y="255.9" font-size="4.6" fill="#c4c4c4" text-anchor="middle">0</text>
<line x1="14.4" y1="265.07" x2="22.5" y2="265.07" stroke="#777" stroke-width="0.4" />
<text x="18.3" y="268.9" font-size="4.6" fill="#c4c4c4" text-anchor="middle">4</text>
<text x="18.3" y="272.9" font-size="4.6" fill="#c4c4c4" text-anchor="middle">5</text>
<text x="18.3" y="276.9" font-size="4.6" fill="#c4c4c4" text-anchor="middle">0</text>
<line x1="14.4" y1="286" x2="22.5" y2="286" stroke="#777" stroke-width="0.4" />
<text x="18.3" y="289.8" font-size="4.6" fill="#c4c4c4" text-anchor="middle">5</text>
<text x="18.3" y="293.8" font-size="4.6" fill="#c4c4c4" text-anchor="middle">0</text>
<text x="18.3" y="297.8" font-size="4.6" fill="#c4c4c4" text-anchor="middle">0</text>
<line x1="14.4" y1="306.93" x2="22.5" y2="306.93" stroke="#777" stroke-width="0.4" />
<text x="18.3" y="310.7" font-size="4.6" fill="#c4c4c4" text-anchor="middle">5</text>
<text x="18.3" y="314.7" font-size="4.6" fill="#c4c4c4" text-anchor="middle">5</text>
<text x="18.3" y="318.7" font-size="4.6" fill="#c4c4c4" text-anchor="middle">0</text>
<line x1="14.4" y1="327.86" x2="22.5" y2="327.86" stroke="#777" stroke-width="0.4" />
<text x="18.3" y="331.7" font-size="4.6" fill="#c4c4c4" text-anchor="middle">6</text>
<text x="18.3" y="335.7" font-size="4.6" fill="#c4c4c4" text-anchor="middle">0</text>
<text x="18.3" y="339.7" font-size="4.6" fill="#c4c4c4" text-anchor="middle">0</text>
<line x1="14.4" y1="348.79" x2="22.5" y2="348.79" stroke="#777" stroke-width="0.4" />
<text x="18.3" y="352.6" font-size="4.6" fill="#c4c4c4" text-anchor="middle">6</text>
<text x="18.3" y="356.6" font-size="4.6" fill="#c4c4c4" text-anchor="middle">5</text>
<text x="18.3" y="360.6" font-size="4.6" fill="#c4c4c4" text-anchor="middle">0</text>
<line x1="14.4" y1="369.72" x2="22.5" y2="369.72" stroke="#777" stroke-width="0.4" />
<text x="18.3" y="373.5" font-size="4.6" fill="#c4c4c4" text-anchor="middle">7</text>
<text x="18.3" y="377.5" font-size="4.6" fill="#c4c4c4" text-anchor="middle">0</text>
<text x="18.3" y="381.5" font-size="4.6" fill="#c4c4c4" text-anchor="middle">0</text>
<line x1="14.4" y1="390.65" x2="22.5" y2="390.65" stroke="#777" stroke-width="0.4" />
<text x="18.3" y="394.4" font-size="4.6" fill="#c4c4c4" text-anchor="middle">7</text>
<text x="18.3" y="398.4" font-size="4.6" fill="#c4c4c4" text-anchor="middle">5</text>
<text x="18.3" y="402.4" font-size="4.6" fill="#c4c4c4" text-anchor="middle">0</text>
<line x1="14.4" y1="411.58" x2="22.5" y2="411.58" stroke="#777" stroke-width="0.4" />
<text x="18.3" y="415.4" font-size="4.6" fill="#c4c4c4" text-anchor="middle">8</text>
<text x="18.3" y="419.4" font-size="4.6" fill="#c4c4c4" text-anchor="middle">0</text>
<text x="18.3" y="423.4" font-size="4.6" fill="#c4c4c4" text-anchor="middle">0</text>
<line x1="14.4" y1="432.51" x2="22.5" y2="432.51" stroke="#777" stroke-width="0.4" />
<text x="18.3" y="436.3" font-size="4.6" fill="#c4c4c4" text-anchor="middle">8</text>
<text x="18.3" y="440.3" font-size="4.6" fill="#c4c4c4" text-anchor="middle">5</text>
<text x="18.3" y="444.3" font-size="4.6" fill="#c4c4c4" text-anchor="middle">0</text>
<line x1="21.2" y1="43" x2="21.2" y2="445" stroke="#808080" stroke-width="1" stroke-dasharray="0.4 1.693"/>
<line x1="22.1" y1="43" x2="22.1" y2="445" stroke="#303030" stroke-width="0.9" />
<rect x="712" y="35" width="8" height="68" fill="#444444" />
<rect x="713" y="36" width="4" height="70" rx="2" fill="#6c6c6c"/>
<rect x="717.6" y="35" width="2.6" height="68" fill="#3c3c3c" />
<rect x="719" y="23" width="1.2" height="427" fill="#383838" />
<text x="20" y="449.46" font-size="4.6" fill="#d8d8d8" text-anchor="start" textLength="13.0" lengthAdjust="spacingAndGlyphs">200%</text>
<rect x="41" y="445" width="80" height="5" fill="#4a4a4a" />
<text x="47" y="449.46" font-size="4.6" fill="#c8c8c8" text-anchor="start" textLength="56.0" lengthAdjust="spacingAndGlyphs">3100 px x 2132 px (300 ppi)</text>
<path d="M112.9 446.6L113.9 447.6L112.9 448.6" stroke="#ccc" stroke-width="0.5" fill="none" stroke-linecap="round" stroke-linejoin="round" />
<rect x="122" y="445" width="494" height="5" fill="#454545" />
<rect x="127" y="445.6" width="156" height="4.4" rx="2" fill="#6a6a6a"/>
</g>
<g id="ui-tools" filter="url(#nf)">
<rect x="0.6" y="121.6" width="12" height="10.6" fill="#383838" rx="1"/>
<path d="M6.2 37.6V43.199999999999996M3.4000000000000004 40.4H9.0" stroke="#e8e8e8" stroke-width="0.8" fill="none" stroke-linecap="round" stroke-linejoin="round" />
<path d="M5.1 38.3L6.2 37.0L7.300000000000001 38.3ZM5.1 42.5L6.2 43.8L7.300000000000001 42.5ZM4.1 39.3L2.8000000000000003 40.4L4.1 41.5ZM8.3 39.3L9.6 40.4L8.3 41.5Z" stroke="#e8e8e8" stroke-width="0.3" fill="#e8e8e8" stroke-linecap="round" stroke-linejoin="round" />
<path d="M10.8 43.6L10.8 44.6L9.8 44.6Z" stroke="none" stroke-width="0" fill="#cfcfcf" stroke-linecap="round" stroke-linejoin="round" />
<ellipse cx="6.2" cy="51.3" rx="3.3" ry="2.9" fill="none" stroke="#e8e8e8" stroke-width="0.7" stroke-dasharray="1.2 0.7"/>
<path d="M10.8 54.5L10.8 55.5L9.8 55.5Z" stroke="none" stroke-width="0" fill="#cfcfcf" stroke-linecap="round" stroke-linejoin="round" />
<ellipse cx="6.5" cy="61.4" rx="3.4" ry="2.3" fill="none" stroke="#e8e8e8" stroke-width="0.8" transform="rotate(-12 6.2 62)"/>
<path d="M3.8000000000000003 63C2.8000000000000003 64 3.6 65.2 4.6 65.6" stroke="#e8e8e8" stroke-width="0.7" fill="none" stroke-linecap="round" stroke-linejoin="round" />
<path d="M10.8 65.2L10.8 66.2L9.8 66.2Z" stroke="none" stroke-width="0" fill="#cfcfcf" stroke-linecap="round" stroke-linejoin="round" />
<path d="M3.0 76.10000000000001L7.2 71.9" stroke="#e8e8e8" stroke-width="1.3" fill="none" stroke-linecap="round" stroke-linejoin="round" />
<path d="M8.8 69.10000000000001V70.5M8.8 72.10000000000001V73.3M6.8 70.7H8.0M9.6 70.7H10.600000000000001M7.4 69.3L8.0 69.9M9.6 71.5L10.2 72.10000000000001" stroke="#e8e8e8" stroke-width="0.5" fill="none" stroke-linecap="round" stroke-linejoin="round" />
<path d="M10.8 75.9L10.8 76.9L9.8 76.9Z" stroke="none" stroke-width="0" fill="#cfcfcf" stroke-linecap="round" stroke-linejoin="round" />
<path d="M4.4 80.2V86H10.0M2.4000000000000004 82.2H8.2V87.8" stroke="#e8e8e8" stroke-width="0.9" fill="none" stroke-linecap="round" stroke-linejoin="round" />
<path d="M10.8 87.2L10.8 88.2L9.8 88.2Z" stroke="none" stroke-width="0" fill="#cfcfcf" stroke-linecap="round" stroke-linejoin="round" />
<path d="M2.9000000000000004 92.2H9.5V97.8H2.9000000000000004ZM2.9000000000000004 92.2L9.5 97.8M9.5 92.2L2.9000000000000004 97.8" stroke="#e8e8e8" stroke-width="0.7" fill="none" stroke-linecap="round" stroke-linejoin="round" />
<path d="M3.0 109.0L3.6 107.19999999999999L6.8 104.0L8.0 105.19999999999999L4.800000000000001 108.39999999999999Z" stroke="#e8e8e8" stroke-width="0.6" fill="none" stroke-linecap="round" stroke-linejoin="round" />
<path d="M6.4 103.0L8.8 105.39999999999999M7.4 104.39999999999999L9.0 102.6" stroke="#e8e8e8" stroke-width="1.4" fill="none" stroke-linecap="round" stroke-linejoin="round" />
<path d="M10.8 108.8L10.8 109.8L9.8 109.8Z" stroke="none" stroke-width="0" fill="#cfcfcf" stroke-linecap="round" stroke-linejoin="round" />
<rect x="2.2" y="114.9" width="8" height="3" rx="1.5" fill="#e8e8e8" transform="rotate(-45 6.2 116.4)"/>
<rect x="5.3" y="115.5" width="1.8" height="1.8" fill="#535353" transform="rotate(-45 6.2 116.4)"/>
<path d="M10.8 119.6L10.8 120.6L9.8 120.6Z" stroke="none" stroke-width="0" fill="#cfcfcf" stroke-linecap="round" stroke-linejoin="round" />
<path d="M2.8000000000000003 130.2C3.2 128.4 4.2 127.8 5.0 128.4C5.6000000000000005 129.2 4.800000000000001 130.2 2.8000000000000003 130.2Z" stroke="#fff" stroke-width="0.3" fill="#fff" stroke-linecap="round" stroke-linejoin="round" />
<path d="M5.6000000000000005 127.6L9.2 123.39999999999999" stroke="#fff" stroke-width="1.4" fill="none" stroke-linecap="round" stroke-linejoin="round" />
<path d="M10.8 130L10.8 131L9.8 131Z" stroke="none" stroke-width="0" fill="#cfcfcf" stroke-linecap="round" stroke-linejoin="round" />
<path d="M3.0 140.6H9.4M3.0 139.0H9.4V138.0H7.0V136.4A1.5 1.5 0 1 0 5.4 136.4V138.0H3.0Z" stroke="#e8e8e8" stroke-width="0.6" fill="#e8e8e8" stroke-linecap="round" stroke-linejoin="round" />
<path d="M10.8 140.6L10.8 141.6L9.8 141.6Z" stroke="none" stroke-width="0" fill="#cfcfcf" stroke-linecap="round" stroke-linejoin="round" />
<path d="M2.8000000000000003 152.0C3.2 150.4 4.0 149.8 4.800000000000001 150.4C5.2 151.20000000000002 4.6 152.0 2.8000000000000003 152.0Z" stroke="#e8e8e8" stroke-width="0.3" fill="#e8e8e8" stroke-linecap="round" stroke-linejoin="round" />
<path d="M5.4 149.6L9.0 145.8" stroke="#e8e8e8" stroke-width="1.2" fill="none" stroke-linecap="round" stroke-linejoin="round" />
<path d="M2.8000000000000003 147.4A2.6 2.6 0 0 1 6.8 145.6" stroke="#e8e8e8" stroke-width="0.6" fill="none" stroke-linecap="round" stroke-linejoin="round" />
<path d="M2.0 146.8L2.8000000000000003 148.0L3.8000000000000003 146.8" stroke="#e8e8e8" stroke-width="0.5" fill="none" stroke-linecap="round" stroke-linejoin="round" />
<path d="M10.8 151.6L10.8 152.6L9.8 152.6Z" stroke="none" stroke-width="0" fill="#cfcfcf" stroke-linecap="round" stroke-linejoin="round" />
<path d="M2.6 160.8L6.2 157.0L9.6 159.4L6.4 162.8H4.2Z" stroke="#e8e8e8" stroke-width="0.5" fill="#e8e8e8" stroke-linecap="round" stroke-linejoin="round" />
<path d="M3.2 163.4H9.8" stroke="#e8e8e8" stroke-width="0.5" fill="none" stroke-linecap="round" stroke-linejoin="round" />
<path d="M10.8 163L10.8 164L9.8 164Z" stroke="none" stroke-width="0" fill="#cfcfcf" stroke-linecap="round" stroke-linejoin="round" />
<path d="M3.0 170.8L6.2 167.4L9.2 170.4L5.8 173.6Z" stroke="#e8e8e8" stroke-width="0.5" fill="#e8e8e8" stroke-linecap="round" stroke-linejoin="round" />
<path d="M9.6 171.20000000000002C10.4 172.4 10.4 173.4 9.6 173.4C8.8 173.4 8.8 172.4 9.6 171.20000000000002Z" stroke="#e8e8e8" stroke-width="0.3" fill="#e8e8e8" stroke-linecap="round" stroke-linejoin="round" />
<path d="M10.8 173.6L10.8 174.6L9.8 174.6Z" stroke="none" stroke-width="0" fill="#cfcfcf" stroke-linecap="round" stroke-linejoin="round" />
<path d="M4.6 185.0V182.4C2.6 180.8 3.6 178.20000000000002 6.2 178.20000000000002C9.2 178.20000000000002 9.8 180.6 8.4 181.8C7.800000000000001 182.4 6.6000000000000005 182.4 6.2 185.0Z" stroke="#e8e8e8" stroke-width="0.4" fill="#e8e8e8" stroke-linecap="round" stroke-linejoin="round" />
<path d="M10.8 184.6L10.8 185.6L9.8 185.6Z" stroke="none" stroke-width="0" fill="#cfcfcf" stroke-linecap="round" stroke-linejoin="round" />
<circle cx="7" cy="191.8" r="2.2" fill="#e8e8e8" stroke="none" stroke-width="0.7" />
<path d="M5.4 193.6L3.0 196.4" stroke="#e8e8e8" stroke-width="1.2" fill="none" stroke-linecap="round" stroke-linejoin="round" />
<path d="M10.8 196.2L10.8 197.2L9.8 197.2Z" stroke="none" stroke-width="0" fill="#cfcfcf" stroke-linecap="round" stroke-linejoin="round" />
<path d="M2.8000000000000003 207.6L4.0 203.6L6.6000000000000005 201.2L9.2 203.8L6.8 206.4Z" stroke="#e8e8e8" stroke-width="0.5" fill="#e8e8e8" stroke-linecap="round" stroke-linejoin="round" />
<circle cx="5.8" cy="204.6" r="0.8" fill="#535353" stroke="none" stroke-width="0.7" />
<path d="M10.8 207.2L10.8 208.2L9.8 208.2Z" stroke="none" stroke-width="0" fill="#cfcfcf" stroke-linecap="round" stroke-linejoin="round" />
<text x="3.6" y="218.24" font-size="9" font-weight="bold" fill="#f0f0f0" text-anchor="start" textLength="5.4" lengthAdjust="spacingAndGlyphs">T</text>
<path d="M10.8 218.2L10.8 219.2L9.8 219.2Z" stroke="none" stroke-width="0" fill="#cfcfcf" stroke-linecap="round" stroke-linejoin="round" />
<path d="M4.2 221.79999999999998V228.2L5.8 226.6L7.0 229.2L8.0 228.79999999999998L6.8 226.2L9.0 226.2Z" stroke="#e8e8e8" stroke-width="0.3" fill="#e8e8e8" stroke-linecap="round" stroke-linejoin="round" />
<path d="M10.8 228.8L10.8 229.8L9.8 229.8Z" stroke="none" stroke-width="0" fill="#cfcfcf" stroke-linecap="round" stroke-linejoin="round" />
<path d="M2.8000000000000003 233.2H9.6V238.8H2.8000000000000003Z" stroke="#e8e8e8" stroke-width="0.8" fill="none" stroke-linecap="round" stroke-linejoin="round" />
<path d="M10.8 239.2L10.8 240.2L9.8 240.2Z" stroke="none" stroke-width="0" fill="#cfcfcf" stroke-linecap="round" stroke-linejoin="round" />
<path d="M3.6 250.6C2.8000000000000003 248.6 1.7999999999999998 247 3.0 246.6L4.0 247.6V244.4L5.0 244.2V243.4L6.2 243.4V244L7.4 244.2V244.8L8.6 245.2C9.4 247 9.0 249 8.2 250.6Z" stroke="#e8e8e8" stroke-width="0.4" fill="#e8e8e8" stroke-linecap="round" stroke-linejoin="round" />
<path d="M10.8 250.2L10.8 251.2L9.8 251.2Z" stroke="none" stroke-width="0" fill="#cfcfcf" stroke-linecap="round" stroke-linejoin="round" />
<circle cx="5.6" cy="257.4" r="2.5" fill="none" stroke="#e8e8e8" stroke-width="0.9" />
<path d="M7.6 259.4L9.8 261.6" stroke="#e8e8e8" stroke-width="1.2" fill="none" stroke-linecap="round" stroke-linejoin="round" />
<circle cx="3.6" cy="269" r="0.7" fill="#e8e8e8" stroke="none" stroke-width="0.7" />
<circle cx="6.2" cy="269" r="0.7" fill="#e8e8e8" stroke="none" stroke-width="0.7" />
<circle cx="8.8" cy="269" r="0.7" fill="#e8e8e8" stroke="none" stroke-width="0.7" />
<path d="M10.8 271.2L10.8 272.2L9.8 272.2Z" stroke="none" stroke-width="0" fill="#cfcfcf" stroke-linecap="round" stroke-linejoin="round" />
<rect x="0.8" y="277.2" width="2.2" height="2.2" fill="#111" stroke="#ddd" stroke-width="0.3"/>
<rect x="2.2" y="278.6" width="2.2" height="2.2" fill="#fff" />
<path d="M8.6 277.4C10 277 10.8 277.8 10.6 279.2M8.6 277.4L9.4 276.8M8.6 277.4L9.4 278.2M10.6 279.2L10 278.6M10.6 279.2L11.2 278.6" stroke="#ddd" stroke-width="0.4" fill="none" stroke-linecap="round" stroke-linejoin="round" />
<rect x="4.6" y="287.6" width="7.2" height="7.8" fill="#fff" stroke="#999" stroke-width="0.4"/>
<rect x="0.2" y="283" width="7.2" height="7.8" fill="#000" stroke="#aaa" stroke-width="0.5"/>
<path d="M2.8000000000000003 300.79999999999995H9.6V306.0H2.8000000000000003Z" stroke="#cfcfcf" stroke-width="0.6" fill="none" stroke-linecap="round" stroke-linejoin="round" />
<circle cx="6.2" cy="303.4" r="1.5" fill="none" stroke="#cfcfcf" stroke-width="0.5" stroke-dasharray="0.6 0.5"/>
<path d="M4.4 311.2H9.8V315.2H4.4ZM2.8000000000000003 312.8V316.8H8.2" stroke="#cfcfcf" stroke-width="0.7" fill="none" stroke-linecap="round" stroke-linejoin="round" />
<path d="M10.8 317.2L10.8 318.2L9.8 318.2Z" stroke="none" stroke-width="0" fill="#cfcfcf" stroke-linecap="round" stroke-linejoin="round" />
</g>
<g id="ui-right" filter="url(#nf)">
<rect x="721" y="242.2" width="79" height="9" fill="#383838" />
<rect x="720" y="299.6" width="80" height="150.4" fill="#515151" />
<line x1="720" y1="299.6" x2="800" y2="299.6" stroke="#444" stroke-width="0.7" />
<line x1="720" y1="81" x2="800" y2="81" stroke="#434343" stroke-width="0.8" />
<line x1="758" y1="82.6" x2="763" y2="82.6" stroke="#484848" stroke-width="0.6" />
<line x1="720" y1="121.4" x2="800" y2="121.4" stroke="#434343" stroke-width="0.8" />
<line x1="758" y1="123" x2="763" y2="123" stroke="#484848" stroke-width="0.6" />
<line x1="720" y1="138.6" x2="800" y2="138.6" stroke="#434343" stroke-width="0.8" />
<line x1="758" y1="140.2" x2="763" y2="140.2" stroke="#484848" stroke-width="0.6" />
<line x1="720" y1="168.4" x2="800" y2="168.4" stroke="#434343" stroke-width="0.8" />
<line x1="758" y1="170" x2="763" y2="170" stroke="#484848" stroke-width="0.6" />
<line x1="720" y1="197.6" x2="800" y2="197.6" stroke="#434343" stroke-width="0.8" />
<line x1="758" y1="199.2" x2="763" y2="199.2" stroke="#484848" stroke-width="0.6" />
<line x1="720" y1="237.6" x2="800" y2="237.6" stroke="#434343" stroke-width="0.8" />
<line x1="758" y1="239.2" x2="763" y2="239.2" stroke="#484848" stroke-width="0.6" />
<line x1="720" y1="255" x2="800" y2="255" stroke="#434343" stroke-width="0.8" />
<line x1="758" y1="256.6" x2="763" y2="256.6" stroke="#484848" stroke-width="0.6" />
<line x1="720" y1="284.6" x2="800" y2="284.6" stroke="#434343" stroke-width="0.8" />
<line x1="758" y1="286.2" x2="763" y2="286.2" stroke="#484848" stroke-width="0.6" />
<line x1="758" y1="29.6" x2="763" y2="29.6" stroke="#484848" stroke-width="0.6" />
<path d="M796.4 24.6L797.2 25.4L796.4 26.2M797.8 24.6L798.6 25.4L797.8 26.2" stroke="#ccc" stroke-width="0.4" fill="none" stroke-linecap="round" stroke-linejoin="round" />
<text x="735" y="40.02" font-size="5.6" font-weight="bold" fill="#ececec" text-anchor="start" textLength="27.4" lengthAdjust="spacingAndGlyphs">Coolorus 2.5</text>
<text x="735" y="52.02" font-size="5.6" font-weight="bold" fill="#ececec" text-anchor="start" textLength="19.6" lengthAdjust="spacingAndGlyphs">Channels</text>
<text x="735" y="63.82" font-size="5.6" font-weight="bold" fill="#ececec" text-anchor="start" textLength="11.4" lengthAdjust="spacingAndGlyphs">Paths</text>
<text x="735" y="75.62" font-size="5.6" font-weight="bold" fill="#ececec" text-anchor="start" textLength="21.0" lengthAdjust="spacingAndGlyphs">Navigator</text>
<text x="735" y="92.82" font-size="5.6" font-weight="bold" fill="#ececec" text-anchor="start" textLength="20.0" lengthAdjust="spacingAndGlyphs">Swatches</text>
<text x="735" y="104.62" font-size="5.6" font-weight="bold" fill="#ececec" text-anchor="start" textLength="20.5" lengthAdjust="spacingAndGlyphs">Gradients</text>
<text x="735" y="116.42" font-size="5.6" font-weight="bold" fill="#ececec" text-anchor="start" textLength="18.0" lengthAdjust="spacingAndGlyphs">Patterns</text>
<text x="735" y="133.62" font-size="5.6" font-weight="bold" fill="#ececec" text-anchor="start" textLength="28.0" lengthAdjust="spacingAndGlyphs">Clone Source</text>
<text x="735" y="150.62" font-size="5.6" font-weight="bold" fill="#ececec" text-anchor="start" textLength="20.5" lengthAdjust="spacingAndGlyphs">Character</text>
<text x="735" y="162.42" font-size="5.6" font-weight="bold" fill="#ececec" text-anchor="start" textLength="22.0" lengthAdjust="spacingAndGlyphs">Paragraph</text>
<text x="735" y="179.62" font-size="5.6" font-weight="bold" fill="#ececec" text-anchor="start" textLength="36.0" lengthAdjust="spacingAndGlyphs">Paragraph Styles</text>
<text x="735" y="191.42" font-size="5.6" font-weight="bold" fill="#ececec" text-anchor="start" textLength="35.0" lengthAdjust="spacingAndGlyphs">Character Styles</text>
<text x="735" y="208.82" font-size="5.6" font-weight="bold" fill="#ececec" text-anchor="start" textLength="15.8" lengthAdjust="spacingAndGlyphs">History</text>
<text x="735" y="220.42" font-size="5.6" font-weight="bold" fill="#ececec" text-anchor="start" textLength="16.4" lengthAdjust="spacingAndGlyphs">Actions</text>
<text x="735" y="232.02" font-size="5.6" font-weight="bold" fill="#ececec" text-anchor="start" textLength="22.0" lengthAdjust="spacingAndGlyphs">Properties</text>
<text x="735" y="249.02" font-size="5.6" font-weight="bold" fill="#ececec" text-anchor="start" textLength="14.0" lengthAdjust="spacingAndGlyphs">Layers</text>
<text x="735" y="266.42" font-size="5.6" font-weight="bold" fill="#ececec" text-anchor="start" textLength="31.4" lengthAdjust="spacingAndGlyphs">Brush Settings</text>
<text x="735" y="278.42" font-size="5.6" font-weight="bold" fill="#ececec" text-anchor="start" textLength="17.0" lengthAdjust="spacingAndGlyphs">Brushes</text>
<text x="735" y="295.42" font-size="5.6" font-weight="bold" fill="#ececec" text-anchor="start" textLength="11.7" lengthAdjust="spacingAndGlyphs">Color</text>
<circle cx="727.4" cy="37.6" r="2.8" fill="none" stroke="#e2e2e2" stroke-width="1.2" />
<circle cx="729.4" cy="39.2" r="1" fill="#535353" stroke="none" stroke-width="0.7" />
<circle cx="727.4" cy="48.4" r="2" fill="none" stroke="#e2e2e2" stroke-width="0.9" />
<circle cx="726" cy="50.6" r="2" fill="none" stroke="#e2e2e2" stroke-width="0.9" />
<circle cx="728.8" cy="50.6" r="2" fill="none" stroke="#e2e2e2" stroke-width="0.9" />
<path d="M723.8 59.0H731.0M724.8 64.0C724.8 60.4 726.4 59.0 727.4 59.0C728.4 59.0 730.0 60.4 730.0 64.0" stroke="#e2e2e2" stroke-width="0.6" fill="none" stroke-linecap="round" stroke-linejoin="round" />
<rect x="726.6" y="58.2" width="1.6" height="1.6" fill="#e2e2e2" />
<rect x="724" y="63.2" width="1.6" height="1.6" fill="#e2e2e2" />
<rect x="729.2" y="63.2" width="1.6" height="1.6" fill="#e2e2e2" />
<rect x="723.2" y="58.4" width="1.2" height="1.2" fill="#e2e2e2" />
<rect x="730.4" y="58.4" width="1.2" height="1.2" fill="#e2e2e2" />
<circle cx="727.4" cy="73.2" r="1.9" fill="none" stroke="#e2e2e2" stroke-width="0.9" />
<path d="M727.4 69.4V77.0M723.6 73.2H731.1999999999999M724.8 70.60000000000001L730.0 75.8M730.0 70.60000000000001L724.8 75.8" stroke="#e2e2e2" stroke-width="0.5" fill="none" stroke-linecap="round" stroke-linejoin="round" />
<path d="M724.0 87.2H730.8V93.2H724.0ZM724.0 89.2H730.8M724.0 91.2H730.8M726.1999999999999 87.2V93.2M728.6 87.2V93.2" stroke="#e2e2e2" stroke-width="0.6" fill="none" stroke-linecap="round" stroke-linejoin="round" />
<rect x="724" y="87.2" width="6.8" height="2" fill="#e2e2e2" opacity="0.6"/>
<path d="M724.0 99H730.8V105H724.0Z" stroke="#e2e2e2" stroke-width="0.6" fill="none" stroke-linecap="round" stroke-linejoin="round" />
<rect x="724.8" y="99.8" width="5.2" height="4.4" fill="url(#gr)"/>
<path d="M724.0 111H730.8V117H724.0ZM724.0 114H730.8M726.1999999999999 111V117M728.6 111V117" stroke="#e2e2e2" stroke-width="0.7" fill="none" stroke-linecap="round" stroke-linejoin="round" />
<path d="M725.1999999999999 134.39999999999998H731.0M725.1999999999999 133.0H731.0V132.0H729.0V130.6A1.4 1.4 0 1 0 727.1999999999999 130.6V132.0H725.1999999999999Z" stroke="#e2e2e2" stroke-width="0.5" fill="#e2e2e2" stroke-linecap="round" stroke-linejoin="round" />
<path d="M723.4 127.79999999999998H725.0M723.4 129.0H725.0M723.4 130.2H725.0" stroke="#e2e2e2" stroke-width="0.5" fill="none" stroke-linecap="round" stroke-linejoin="round" />
<text x="723.6" y="151.15" font-size="8.2" fill="#e2e2e2" text-anchor="start" textLength="5.6" lengthAdjust="spacingAndGlyphs">A</text>
<line x1="730.6" y1="144.8" x2="730.6" y2="151.6" stroke="#e2e2e2" stroke-width="0.6" />
<text x="724.8" y="163.28" font-size="8" font-weight="bold" fill="#e2e2e2" text-anchor="start" textLength="5.4" lengthAdjust="spacingAndGlyphs">¶</text>
<text x="726.6" y="178.83" font-size="6.2" font-weight="bold" fill="#e2e2e2" text-anchor="start" textLength="4.6" lengthAdjust="spacingAndGlyphs">¶</text>
<circle cx="725.2" cy="179" r="1.5" fill="#e2e2e2" stroke="none" stroke-width="0.7" />
<path d="M726.0 178.2L727.8 175.79999999999998" stroke="#e2e2e2" stroke-width="0.9" fill="none" stroke-linecap="round" stroke-linejoin="round" />
<text x="726.8" y="190.70" font-size="6.4" fill="#e2e2e2" text-anchor="start" textLength="4.6" lengthAdjust="spacingAndGlyphs">A</text>
<circle cx="725" cy="190.8" r="1.5" fill="#e2e2e2" stroke="none" stroke-width="0.7" />
<path d="M725.8 190L727.6 187.6" stroke="#e2e2e2" stroke-width="0.9" fill="none" stroke-linecap="round" stroke-linejoin="round" />
<path d="M724.4 203.0V206.0M724.4 207.0V209.8M723.8 203.0H725.0M723.8 209.8H725.0" stroke="#e2e2e2" stroke-width="0.7" fill="none" stroke-linecap="round" stroke-linejoin="round" />
<path d="M727.8 209.8C731.0 208.0 731.0 204.8 727.8 203.4M727.8 203.4L729.6 203.20000000000002M727.8 203.4L728.6 205.0" stroke="#e2e2e2" stroke-width="0.7" fill="none" stroke-linecap="round" stroke-linejoin="round" />
<path d="M724.6 214.8L730.8 218L724.6 221.2Z" stroke="#e2e2e2" stroke-width="0.3" fill="#e2e2e2" stroke-linecap="round" stroke-linejoin="round" />
<path d="M724.1999999999999 227.0H730.6M724.1999999999999 229.6H730.6M724.1999999999999 232.2H730.6" stroke="#b8b8b8" stroke-width="0.6" fill="none" stroke-linecap="round" stroke-linejoin="round" />
<path d="M726.0 226.0V228.0M728.8 228.6V230.6M727.0 231.2V233.2" stroke="#b8b8b8" stroke-width="0.9" fill="none" stroke-linecap="round" stroke-linejoin="round" />
<path d="M724.0 226.0V233.2M730.8 226.0V233.2" stroke="#999" stroke-width="0.4" fill="none" stroke-linecap="round" stroke-linejoin="round" />
<path d="M727.4 243.4L731.0 245.6L727.4 247.79999999999998L723.8 245.6Z" stroke="#fff" stroke-width="0.3" fill="#fff" stroke-linecap="round" stroke-linejoin="round" />
<path d="M723.8 247.4L727.4 249.6L731.0 247.4" stroke="#fff" stroke-width="0.8" fill="none" stroke-linecap="round" stroke-linejoin="round" />
<path d="M724.8 267.2C725.1999999999999 265.8 726.0 265.4 726.6 265.8C727.1999999999999 266.6 726.4 267.2 724.8 267.2Z" stroke="#e2e2e2" stroke-width="0.3" fill="#e2e2e2" stroke-linecap="round" stroke-linejoin="round" />
<path d="M727.1999999999999 265.2L731.0 260.8" stroke="#e2e2e2" stroke-width="1.2" fill="none" stroke-linecap="round" stroke-linejoin="round" />
<path d="M723.4 260.6H725.0M723.4 261.8H725.0M723.4 263H725.0" stroke="#e2e2e2" stroke-width="0.5" fill="none" stroke-linecap="round" stroke-linejoin="round" />
<path d="M723.6 274.2H731.1999999999999M723.6 277.8H731.1999999999999" stroke="#e2e2e2" stroke-width="0.7" fill="none" stroke-linecap="round" stroke-linejoin="round" />
<rect x="725" y="273" width="2" height="2.4" fill="#e2e2e2" />
<rect x="728" y="276.6" width="2" height="2.4" fill="#e2e2e2" />
<ellipse cx="727.4" cy="293.6" rx="3.8" ry="2.4" fill="none" stroke="#e2e2e2" stroke-width="0.8"/>
<circle cx="728" cy="291.4" r="1.5" fill="#e2e2e2" stroke="none" stroke-width="0.7" />
<circle cx="726.2" cy="293.8" r="0.6" fill="#e2e2e2" stroke="none" stroke-width="0.7" />
</g>
<g id="ui-layers" filter="url(#nf)">
<rect x="615.6" y="102.4" width="103.4" height="344" fill="#2a2a2a" />
<rect x="616.4" y="103" width="102.6" height="343" fill="#535353" />
<rect x="616.4" y="104" width="102.6" height="12.4" fill="#444444" />
<rect x="616.4" y="104" width="22" height="12.6" fill="#535353" />
<text x="620" y="112.22" font-size="5.6" font-weight="bold" fill="#f0f0f0" text-anchor="start" textLength="14.0" lengthAdjust="spacingAndGlyphs">Layers</text>
<path d="M702.6 109L703.8 110.2L702.6 111.4M704.6 109L705.8 110.2L704.6 111.4" stroke="#cfcfcf" stroke-width="0.5" fill="none" stroke-linecap="round" stroke-linejoin="round" />
<line x1="709" y1="108" x2="709" y2="112.6" stroke="#6a6a6a" stroke-width="0.5" />
<path d="M713 109H716.6M713 110.3H716.6M713 111.6H716.6" stroke="#bdbdbd" stroke-width="0.5" fill="none" stroke-linecap="round" stroke-linejoin="round" />
<rect x="618" y="120.4" width="36.4" height="7.6" rx="0.8" fill="#414141" stroke="#686868" stroke-width="0.5"/>
<circle cx="622.6" cy="123.8" r="1.3" fill="none" stroke="#d0d0d0" stroke-width="0.5" />
<path d="M623.6 124.8L624.6 125.8" stroke="#d0d0d0" stroke-width="0.6" fill="none" stroke-linecap="round" stroke-linejoin="round" />
<text x="626.6" y="126.00" font-size="5" fill="#dcdcdc" text-anchor="start" textLength="9.0" lengthAdjust="spacingAndGlyphs">Kind</text>
<path d="M650.3 123.85L651.4 124.95L652.5 123.85" stroke="#d0d0d0" stroke-width="0.7" fill="none" stroke-linecap="round" stroke-linejoin="round" />
<path d="M659.2 121.8H664.8V126.6H659.2Z" stroke="#dedede" stroke-width="0.6" fill="none" stroke-linecap="round" stroke-linejoin="round" />
<path d="M659.8 126L661.4 124L662.6 125.2L663.4 124.4L664.4 126Z" stroke="#dedede" stroke-width="0.2" fill="#dedede" stroke-linecap="round" stroke-linejoin="round" />
<circle cx="672" cy="124.2" r="2.4" fill="none" stroke="#dedede" stroke-width="0.6" />
<path d="M672 121.8A2.4 2.4 0 0 0 672 126.6Z" stroke="none" stroke-width="0" fill="#dedede" stroke-linecap="round" stroke-linejoin="round" />
<path d="M672 124.2L673.8 122.6A2.4 2.4 0 0 1 674.4 124.2Z" stroke="none" stroke-width="0" fill="#dedede" stroke-linecap="round" stroke-linejoin="round" />
<text x="679.6" y="126.50" font-size="6.4" font-weight="bold" fill="#dedede" text-anchor="start" textLength="4.2" lengthAdjust="spacingAndGlyphs">T</text>
<path d="M689.6 122.2H693.8V126.2H689.6Z" stroke="#dedede" stroke-width="0.6" fill="none" stroke-linecap="round" stroke-linejoin="round" />
<rect x="688.9" y="121.5" width="1.4" height="1.4" fill="#dedede" />
<rect x="693.1" y="121.5" width="1.4" height="1.4" fill="#dedede" />
<rect x="688.9" y="125.5" width="1.4" height="1.4" fill="#dedede" />
<rect x="693.1" y="125.5" width="1.4" height="1.4" fill="#dedede" />
<path d="M699.6 121.6H702.6L704.2 123.2V126.8H699.6Z" stroke="#dedede" stroke-width="0.5" fill="#dedede" stroke-linecap="round" stroke-linejoin="round" />
<rect x="700.4" y="124.2" width="2.2" height="2.2" fill="#535353" />
<rect x="709.6" y="120" width="4.8" height="8.2" rx="2.4" fill="#3a3a3a"/>
<circle cx="712" cy="122.2" r="2" fill="#f2f2f2" stroke="none" stroke-width="0.7" />
<rect x="618" y="132.4" width="54" height="7" rx="0.8" fill="#414141" stroke="#686868" stroke-width="0.5"/>
<text x="621" y="137.80" font-size="5" fill="#dcdcdc" text-anchor="start" textLength="14.6" lengthAdjust="spacingAndGlyphs">Normal</text>
<path d="M668.3 135.65L669.4 136.75L670.5 135.65" stroke="#d0d0d0" stroke-width="0.7" fill="none" stroke-linecap="round" stroke-linejoin="round" />
<text x="674" y="137.80" font-size="5" fill="#b4b4b4" text-anchor="start" textLength="16.0" lengthAdjust="spacingAndGlyphs">Opacity:</text>
<rect x="691.4" y="132.4" width="14.6" height="7" rx="0.8" fill="#414141" stroke="#686868" stroke-width="0.5"/>
<text x="693.6" y="137.80" font-size="5" fill="#dcdcdc" text-anchor="start" textLength="10.4" lengthAdjust="spacingAndGlyphs">100%</text>
<rect x="707.4" y="132.4" width="5.6" height="7" rx="0.8" fill="#414141" stroke="#686868" stroke-width="0.5"/>
<path d="M709.2 135.7L710.2 136.7L711.2 135.7" stroke="#d0d0d0" stroke-width="0.7" fill="none" stroke-linecap="round" stroke-linejoin="round" />
<text x="618" y="149.40" font-size="5" fill="#a8a8a8" text-anchor="start" textLength="10.4" lengthAdjust="spacingAndGlyphs">Lock:</text>
<rect x="632.4" y="145.4" width="4.2" height="4.2" fill="none" stroke="#dedede" stroke-width="0.6"/>
<rect x="632.4" y="145.4" width="2.1" height="2.1" fill="#dedede" />
<rect x="634.5" y="147.5" width="2.1" height="2.1" fill="#dedede" />
<path d="M642.4 149.8C642.6 148.8 643.2 148.6 643.6 148.8L646 145.4" stroke="#dedede" stroke-width="1" fill="none" stroke-linecap="round" stroke-linejoin="round" />
<path d="M652.4 144.6V150.2M649.6 147.4H655.2" stroke="#dedede" stroke-width="0.6" fill="none" stroke-linecap="round" stroke-linejoin="round" />
<path d="M651.6 145.4L652.4 144.4L653.2 145.4M651.6 149.4L652.4 150.4L653.2 149.4M650.4 146.6L649.4 147.4L650.4 148.2M654.4 146.6L655.4 147.4L654.4 148.2" stroke="#dedede" stroke-width="0.5" fill="none" stroke-linecap="round" stroke-linejoin="round" />
<path d="M660 145.8H664.4V149.6H660ZM659 146.8H660M664.4 148.6H665.4M661 144.8V145.8M663.4 149.6V150.6" stroke="#dedede" stroke-width="0.6" fill="none" stroke-linecap="round" stroke-linejoin="round" />
<path d="M669.2 147H673V150.2H669.2Z" stroke="#dedede" stroke-width="0.4" fill="#dedede" stroke-linecap="round" stroke-linejoin="round" />
<path d="M670 147V146A1.1 1.1 0 0 1 672.2 146V147" stroke="#dedede" stroke-width="0.6" fill="none" stroke-linecap="round" stroke-linejoin="round" />
<text x="684" y="149.40" font-size="5" fill="#b4b4b4" text-anchor="start" textLength="6.0" lengthAdjust="spacingAndGlyphs">Fill:</text>
<rect x="691.4" y="144" width="14.6" height="7" rx="0.8" fill="#414141" stroke="#686868" stroke-width="0.5"/>
<text x="693.6" y="149.40" font-size="5" fill="#dcdcdc" text-anchor="start" textLength="10.4" lengthAdjust="spacingAndGlyphs">100%</text>
<rect x="707.4" y="144" width="5.6" height="7" rx="0.8" fill="#414141" stroke="#686868" stroke-width="0.5"/>
<path d="M709.2 147.3L710.2 148.3L711.2 147.3" stroke="#d0d0d0" stroke-width="0.7" fill="none" stroke-linecap="round" stroke-linejoin="round" />
<rect x="616.4" y="155" width="96.6" height="279.8" fill="#4e4e4e" />
<rect x="616.4" y="155" width="96.6" height="10.6" fill="#434343" />
<path d="M620.1999999999999 160.2C621.4 158.2 624.1999999999999 158.2 625.4 160.2C624.1999999999999 162.2 621.4 162.2 620.1999999999999 160.2Z" stroke="#f4f4f4" stroke-width="0.3" fill="#f4f4f4" stroke-linecap="round" stroke-linejoin="round" />
<circle cx="622.8" cy="160.2" r="0.9" fill="#333" stroke="none" stroke-width="0.7" />
<path d="M631.2 159.8L632.4 161L633.6 159.8" stroke="#cfcfcf" stroke-width="0.6" fill="none" stroke-linecap="round" stroke-linejoin="round" />
<text x="637.6" y="162.14" font-size="5.4" font-weight="bold" fill="#f2f2f2" text-anchor="start" textLength="22.4" lengthAdjust="spacingAndGlyphs">Artboard 1</text>
<rect x="616.4" y="165.6" width="12.4" height="10.4" fill="#57803b" />
<line x1="616.4" y1="176" x2="713" y2="176" stroke="#434343" stroke-width="0.5" />
<rect x="620.4" y="168.4" width="4.8" height="4.8" fill="none" stroke="rgba(0,0,0,0.22)" stroke-width="0.5"/>
<path d="M638 169.6L639.2 170.8L638 172" stroke="#cfcfcf" stroke-width="0.6" fill="none" stroke-linecap="round" stroke-linejoin="round" />
<path d="M642 168.60000000000002H644.2L644.8 169.20000000000002H648V173.20000000000002H642Z" stroke="#ececec" stroke-width="0.3" fill="#ececec" stroke-linecap="round" stroke-linejoin="round" />
<line x1="642.4" y1="170.1" x2="647.8" y2="170.1" stroke="#555" stroke-width="0.4" />
<text x="652.6" y="172.36" font-size="5.2" fill="#dadada" text-anchor="start" textLength="36.0" lengthAdjust="spacingAndGlyphs">A quick thank you</text>
<rect x="616.4" y="176" width="12.4" height="10.4" fill="#a9463f" />
<line x1="616.4" y1="186.4" x2="713" y2="186.4" stroke="#434343" stroke-width="0.5" />
<rect x="620.4" y="178.8" width="4.8" height="4.8" fill="none" stroke="rgba(0,0,0,0.22)" stroke-width="0.5"/>
<path d="M638 180L639.2 181.2L638 182.4" stroke="#cfcfcf" stroke-width="0.6" fill="none" stroke-linecap="round" stroke-linejoin="round" />
<path d="M642 179.0H644.2L644.8 179.6H648V183.6H642Z" stroke="#ececec" stroke-width="0.3" fill="#ececec" stroke-linecap="round" stroke-linejoin="round" />
<line x1="642.4" y1="180.5" x2="647.8" y2="180.5" stroke="#555" stroke-width="0.4" />
<text x="652.6" y="182.76" font-size="5.2" fill="#dadada" text-anchor="start" textLength="24.8" lengthAdjust="spacingAndGlyphs">Final Render</text>
<rect x="616.4" y="186.4" width="12.4" height="10.4" fill="#744fa8" />
<line x1="616.4" y1="196.8" x2="713" y2="196.8" stroke="#434343" stroke-width="0.5" />
<rect x="620.4" y="189.2" width="4.8" height="4.8" fill="none" stroke="rgba(0,0,0,0.22)" stroke-width="0.5"/>
<path d="M638 190.4L639.2 191.6L638 192.8" stroke="#cfcfcf" stroke-width="0.6" fill="none" stroke-linecap="round" stroke-linejoin="round" />
<path d="M642 189.40000000000003H644.2L644.8 190.00000000000003H648V194.00000000000003H642Z" stroke="#ececec" stroke-width="0.3" fill="#ececec" stroke-linecap="round" stroke-linejoin="round" />
<line x1="642.4" y1="190.9" x2="647.8" y2="190.9" stroke="#555" stroke-width="0.4" />
<text x="652.6" y="193.16" font-size="5.2" fill="#dadada" text-anchor="start" textLength="50.4" lengthAdjust="spacingAndGlyphs">Black and w... and colour</text>
<rect x="616.4" y="196.8" width="12.4" height="10.6" fill="#4b68a0" />
<line x1="616.4" y1="207.4" x2="713" y2="207.4" stroke="#434343" stroke-width="0.5" />
<path d="M620.1999999999999 202.10000000000002C621.4 200.10000000000002 624.1999999999999 200.10000000000002 625.4 202.10000000000002C624.1999999999999 204.10000000000002 621.4 204.10000000000002 620.1999999999999 202.10000000000002Z" stroke="#f4f4f4" stroke-width="0.3" fill="#f4f4f4" stroke-linecap="round" stroke-linejoin="round" />
<circle cx="622.8" cy="202.1" r="0.9" fill="#333" stroke="none" stroke-width="0.7" />
<path d="M637.4 201.5L638.6 202.7L639.8 201.5" stroke="#cfcfcf" stroke-width="0.6" fill="none" stroke-linecap="round" stroke-linejoin="round" />
<path d="M642 199.90000000000003H644.2L644.8 200.50000000000003H648V204.50000000000003H642Z" stroke="#ececec" stroke-width="0.3" fill="#ececec" stroke-linecap="round" stroke-linejoin="round" />
<line x1="642.4" y1="201.4" x2="647.8" y2="201.4" stroke="#555" stroke-width="0.4" />
<rect x="643" y="201.9" width="4" height="1.8" fill="#4d4d4d" />
<text x="652.6" y="203.66" font-size="5.2" fill="#dadada" text-anchor="start" textLength="42.4" lengthAdjust="spacingAndGlyphs">The Sketch Clean Up</text>
<rect x="616.4" y="207.4" width="12.4" height="10.4" fill="#4b68a0" />
<line x1="616.4" y1="217.8" x2="713" y2="217.8" stroke="#434343" stroke-width="0.5" />
<rect x="620.4" y="210.2" width="4.8" height="4.8" fill="none" stroke="rgba(0,0,0,0.22)" stroke-width="0.5"/>
<path d="M644.8 211.4L646 212.6L644.8 213.8" stroke="#cfcfcf" stroke-width="0.6" fill="none" stroke-linecap="round" stroke-linejoin="round" />
<path d="M648.8 210.40000000000003H651.0L651.5999999999999 211.00000000000003H654.8V215.00000000000003H648.8Z" stroke="#ececec" stroke-width="0.3" fill="#ececec" stroke-linecap="round" stroke-linejoin="round" />
<line x1="649.2" y1="211.9" x2="654.6" y2="211.9" stroke="#555" stroke-width="0.4" />
<text x="659.4" y="214.16" font-size="5.2" fill="#dadada" text-anchor="start" textLength="19.6" lengthAdjust="spacingAndGlyphs">Shoes 3D</text>
<rect x="616.4" y="217.8" width="12.4" height="13.4" fill="#4b68a0" />
<line x1="616.4" y1="231.2" x2="713" y2="231.2" stroke="#434343" stroke-width="0.5" />
<path d="M620.1999999999999 224.5C621.4 222.5 624.1999999999999 222.5 625.4 224.5C624.1999999999999 226.5 621.4 226.5 620.1999999999999 224.5Z" stroke="#f4f4f4" stroke-width="0.3" fill="#f4f4f4" stroke-linecap="round" stroke-linejoin="round" />
<circle cx="622.8" cy="224.5" r="0.9" fill="#333" stroke="none" stroke-width="0.7" />
<rect x="644.2" y="219.7" width="13.4" height="9.6" fill="#e3e3e3" stroke="#fff" stroke-width="0.9"/>
<text x="660.6" y="226.06" font-size="5.2" fill="#dadada" text-anchor="start" textLength="15.0" lengthAdjust="spacingAndGlyphs">Layer 9</text>
<rect x="616.4" y="231.2" width="12.4" height="13.4" fill="#4b68a0" />
<line x1="616.4" y1="244.6" x2="713" y2="244.6" stroke="#434343" stroke-width="0.5" />
<rect x="620.4" y="235.5" width="4.8" height="4.8" fill="none" stroke="rgba(0,0,0,0.22)" stroke-width="0.5"/>
<rect x="644.2" y="233.1" width="13.4" height="9.6" fill="#e3e3e3" stroke="#fff" stroke-width="0.9"/>
<text x="660.6" y="239.46" font-size="5.2" fill="#dadada" text-anchor="start" textLength="16.0" lengthAdjust="spacingAndGlyphs">Layer 16</text>
<rect x="628.8" y="244.6" width="84.2" height="13.4" fill="#6b6b6b" />
<rect x="616.4" y="244.6" width="12.4" height="13.4" fill="#4b68a0" />
<line x1="616.4" y1="258" x2="713" y2="258" stroke="#434343" stroke-width="0.5" />
<path d="M620.1999999999999 251.3C621.4 249.3 624.1999999999999 249.3 625.4 251.3C624.1999999999999 253.3 621.4 253.3 620.1999999999999 251.3Z" stroke="#f4f4f4" stroke-width="0.3" fill="#f4f4f4" stroke-linecap="round" stroke-linejoin="round" />
<circle cx="622.8" cy="251.3" r="0.9" fill="#333" stroke="none" stroke-width="0.7" />
<rect x="644.2" y="246.5" width="13.4" height="9.6" fill="#e3e3e3" stroke="#fff" stroke-width="0.9"/>
<rect x="642.8" y="245.3" width="16.2" height="12" fill="none" stroke="#f0f0f0" stroke-width="0.5" stroke-dasharray="2.4 1.2"/>
<text x="660.6" y="252.86" font-size="5.2" fill="#dadada" text-anchor="start" textLength="19.4" lengthAdjust="spacingAndGlyphs">Layer 127</text>
<rect x="616.4" y="258" width="12.4" height="13.4" fill="#4b68a0" />
<line x1="616.4" y1="271.4" x2="713" y2="271.4" stroke="#434343" stroke-width="0.5" />
<path d="M620.1999999999999 264.7C621.4 262.7 624.1999999999999 262.7 625.4 264.7C624.1999999999999 266.7 621.4 266.7 620.1999999999999 264.7Z" stroke="#f4f4f4" stroke-width="0.3" fill="#f4f4f4" stroke-linecap="round" stroke-linejoin="round" />
<circle cx="622.8" cy="264.7" r="0.9" fill="#333" stroke="none" stroke-width="0.7" />
<rect x="644.2" y="259.9" width="13.4" height="9.6" fill="#e3e3e3" stroke="#fff" stroke-width="0.9"/>
<text x="660.6" y="266.26" font-size="5.2" fill="#dadada" text-anchor="start" textLength="16.8" lengthAdjust="spacingAndGlyphs">Layer 10</text>
<rect x="616.4" y="271.4" width="12.4" height="13.6" fill="#4b68a0" />
<line x1="616.4" y1="285" x2="713" y2="285" stroke="#434343" stroke-width="0.5" />
<path d="M620.1999999999999 278.2C621.4 276.2 624.1999999999999 276.2 625.4 278.2C624.1999999999999 280.2 621.4 280.2 620.1999999999999 278.2Z" stroke="#f4f4f4" stroke-width="0.3" fill="#f4f4f4" stroke-linecap="round" stroke-linejoin="round" />
<circle cx="622.8" cy="278.2" r="0.9" fill="#333" stroke="none" stroke-width="0.7" />
<rect x="644.2" y="273.4" width="13.4" height="9.6" fill="#e3e3e3" stroke="#fff" stroke-width="0.9"/>
<text x="660.6" y="279.76" font-size="5.2" fill="#dadada" text-anchor="start" textLength="29.4" lengthAdjust="spacingAndGlyphs">original sketch</text>
<rect x="616.4" y="285" width="12.4" height="13.2" fill="#4b68a0" />
<line x1="616.4" y1="298.2" x2="713" y2="298.2" stroke="#434343" stroke-width="0.5" />
<path d="M620.1999999999999 291.6C621.4 289.6 624.1999999999999 289.6 625.4 291.6C624.1999999999999 293.6 621.4 293.6 620.1999999999999 291.6Z" stroke="#f4f4f4" stroke-width="0.3" fill="#f4f4f4" stroke-linecap="round" stroke-linejoin="round" />
<circle cx="622.8" cy="291.6" r="0.9" fill="#333" stroke="none" stroke-width="0.7" />
<rect x="644.2" y="286.8" width="13.4" height="9.6" fill="#e3e3e3" stroke="#fff" stroke-width="0.9"/>
<text x="660.6" y="293.16" font-size="5.2" fill="#dadada" text-anchor="start" textLength="15.0" lengthAdjust="spacingAndGlyphs">Layer 8</text>
<rect x="616.4" y="298.2" width="12.4" height="10.4" fill="#9d8523" />
<line x1="616.4" y1="308.6" x2="713" y2="308.6" stroke="#434343" stroke-width="0.5" />
<rect x="620.4" y="301" width="4.8" height="4.8" fill="none" stroke="rgba(0,0,0,0.22)" stroke-width="0.5"/>
<path d="M638 302.2L639.2 303.4L638 304.6" stroke="#cfcfcf" stroke-width="0.6" fill="none" stroke-linecap="round" stroke-linejoin="round" />
<path d="M642 301.2H644.2L644.8 301.79999999999995H648V305.79999999999995H642Z" stroke="#ececec" stroke-width="0.3" fill="#ececec" stroke-linecap="round" stroke-linejoin="round" />
<line x1="642.4" y1="302.7" x2="647.8" y2="302.7" stroke="#555" stroke-width="0.4" />
<text x="652.6" y="304.96" font-size="5.2" fill="#dadada" text-anchor="start" textLength="22.8" lengthAdjust="spacingAndGlyphs">The Sketch</text>
<rect x="616.4" y="308.6" width="12.4" height="13.4" fill="#4d4d4d" />
<line x1="616.4" y1="322" x2="713" y2="322" stroke="#434343" stroke-width="0.5" />
<path d="M620.1999999999999 315.3C621.4 313.3 624.1999999999999 313.3 625.4 315.3C624.1999999999999 317.3 621.4 317.3 620.1999999999999 315.3Z" stroke="#f4f4f4" stroke-width="0.3" fill="#f4f4f4" stroke-linecap="round" stroke-linejoin="round" />
<circle cx="622.8" cy="315.3" r="0.9" fill="#333" stroke="none" stroke-width="0.7" />
<rect x="637.4" y="310.7" width="12.8" height="9.2" fill="#fff" />
<line x1="628.8" y1="165.6" x2="628.8" y2="322" stroke="#434343" stroke-width="0.4" />
<rect x="616.4" y="434.8" width="102.6" height="10.4" fill="#535353" />
<line x1="616.4" y1="434.8" x2="719" y2="434.8" stroke="#464646" stroke-width="0.5" />
<rect x="616.4" y="445.2" width="102.6" height="1" fill="#333" />
<rect x="616.4" y="446.2" width="102.6" height="3.8" fill="#4a4a4a" />
<rect x="634.6" y="438.7" width="3" height="2.2" rx="1.1" fill="none" stroke="#8a8a8a" stroke-width="0.6"/><rect x="636.8" y="438.7" width="3" height="2.2" rx="1.1" fill="none" stroke="#8a8a8a" stroke-width="0.6"/>
<text x="645.4" y="441.6" font-size="6.4" font-style="italic" fill="#e4e4e4" font-family="Liberation Serif,serif" textLength="6" lengthAdjust="spacingAndGlyphs">fx</text>
<rect x="651.4" y="441.8" width="0.9" height="0.9" fill="#e4e4e4" />
<rect x="656.6" y="437.6" width="6" height="4.6" fill="#e4e4e4" rx="0.5"/>
<circle cx="659.6" cy="439.9" r="1.3" fill="#535353" stroke="none" stroke-width="0.7" />
<circle cx="670.4" cy="439.6" r="2.4" fill="none" stroke="#e4e4e4" stroke-width="0.6" />
<path d="M670.4 437.2A2.4 2.4 0 0 0 670.4 442.0Z" stroke="none" stroke-width="0" fill="#e4e4e4" stroke-linecap="round" stroke-linejoin="round" />
<path d="M670.4 439.6L672.2 438.0A2.4 2.4 0 0 1 672.8 439.6Z" stroke="none" stroke-width="0" fill="#e4e4e4" stroke-linecap="round" stroke-linejoin="round" />
<rect x="673.6" y="441.8" width="0.9" height="0.9" fill="#e4e4e4" />
<path d="M679.4 437.6H681.8L682.4 438.2H685.4V442.2H679.4Z" stroke="#e4e4e4" stroke-width="0.3" fill="#e4e4e4" stroke-linecap="round" stroke-linejoin="round" />
<rect x="691" y="437.4" width="5" height="5" fill="none" stroke="#e4e4e4" stroke-width="0.6" rx="0.5"/>
<path d="M693.5 438.6V441.2M692.2 439.90000000000003H694.8" stroke="#e4e4e4" stroke-width="0.6" fill="none" stroke-linecap="round" stroke-linejoin="round" />
<path d="M702.6 438.40000000000003H706.6L706.2 442.6H703ZM702 438.2H707.2M703.8 437.40000000000003H705.4" stroke="#e4e4e4" stroke-width="0.5" fill="#e4e4e4" stroke-linecap="round" stroke-linejoin="round" />
<line x1="664" y1="447.6" x2="670" y2="447.6" stroke="#5e5e5e" stroke-width="0.6" />
</g>
</svg>
</body></html>
